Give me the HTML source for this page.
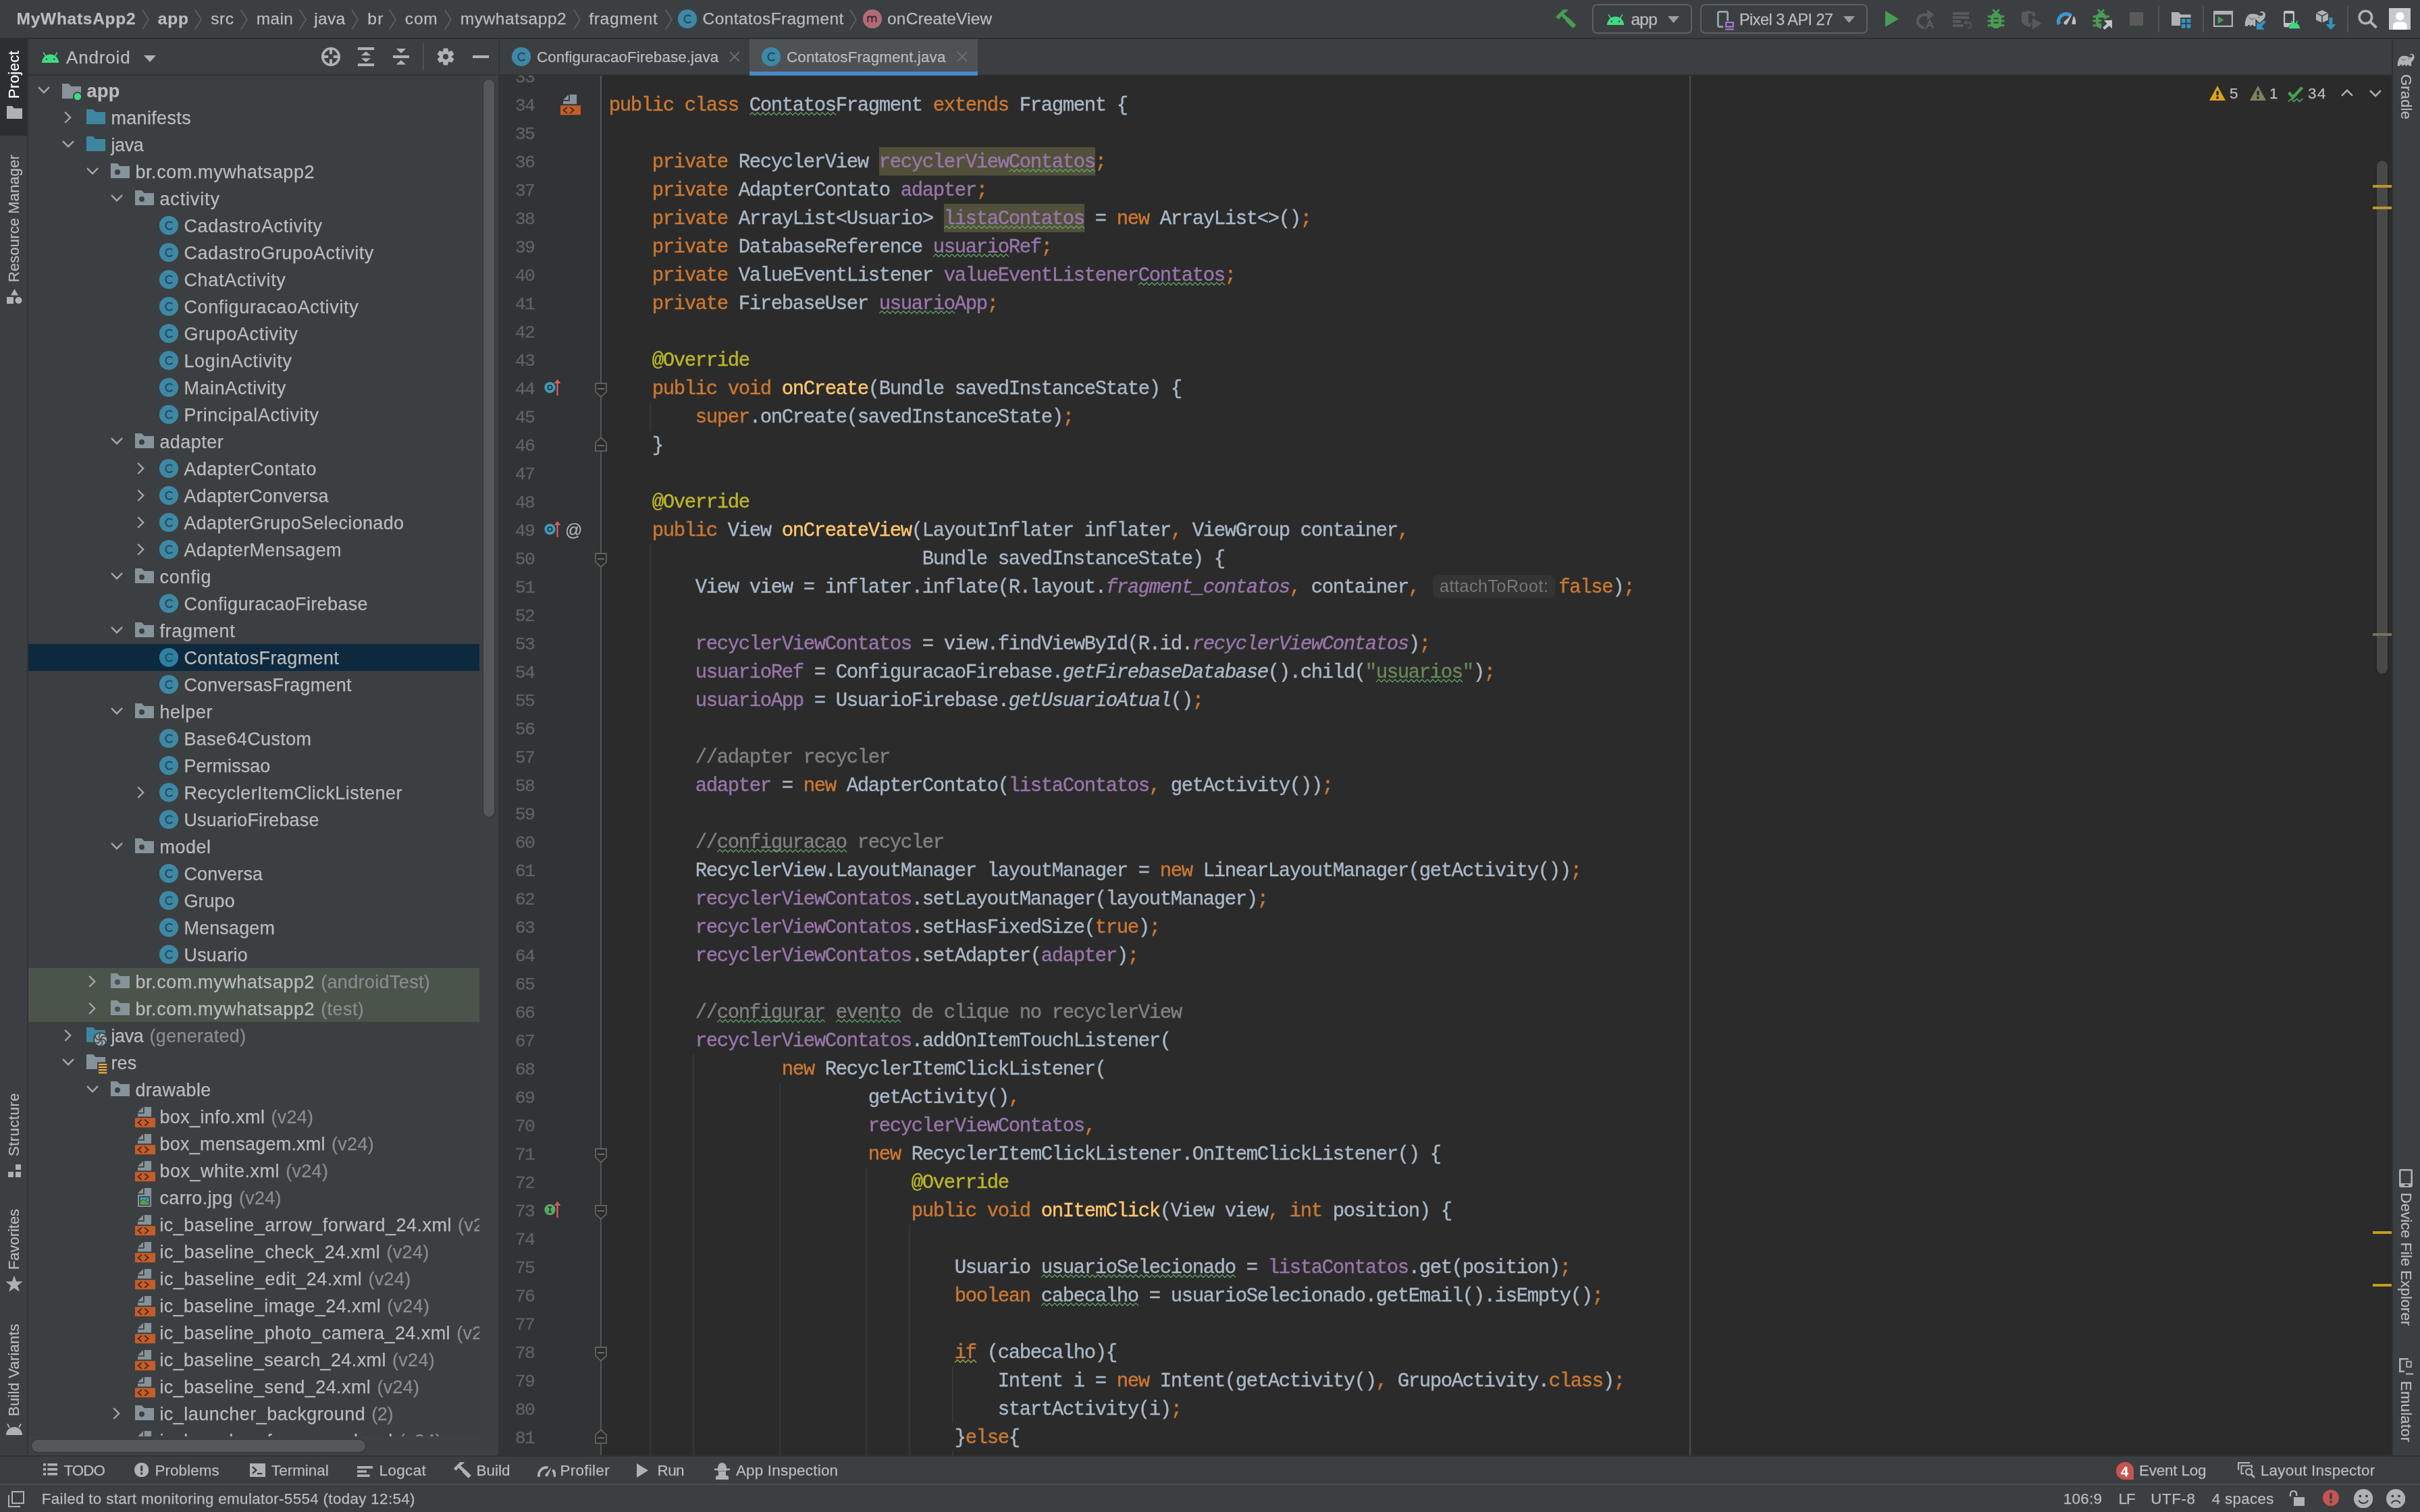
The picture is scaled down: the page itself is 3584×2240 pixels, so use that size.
<!DOCTYPE html><html><head><meta charset="utf-8"><title>Android Studio</title><style>
*{box-sizing:border-box;margin:0;padding:0}
@media (-webkit-min-device-pixel-ratio:2) and (max-width:1800px){html{zoom:0.5}}
html,body{width:3584px;height:2240px;overflow:hidden;background:#3c3f41;font-family:"Liberation Sans",sans-serif;color:#bbbbbb}
.abs{position:absolute}
.t{position:absolute;white-space:nowrap;-webkit-text-stroke:0.25px}
#root{position:absolute;left:0;top:0;width:3584px;height:2240px;overflow:hidden;will-change:transform}
#nav{position:absolute;left:0;top:0;width:3584px;height:56px;background:#3c3f41}
#navb{position:absolute;left:0;top:56px;width:3584px;height:2px;background:#2d2f30}
#lstrip{position:absolute;left:0;top:58px;width:40px;height:2098px;background:#3c3f41}
#lstripb{position:absolute;left:40px;top:58px;width:2px;height:2098px;background:#313335}
#proj{position:absolute;left:42px;top:58px;width:696px;height:2098px;background:#3c3f41}
#projhb{position:absolute;left:0;top:52px;width:696px;height:2px;background:#313234}
#tree{position:absolute;left:0;top:54px;width:668px;height:2016px;overflow:hidden}
.row{position:absolute;left:0;width:668px;height:40px}
.row.sel{background:#0d293e}
.row.tst{background:#4a544a}
.tt{-webkit-text-stroke:0.25px;position:absolute;top:1px;line-height:40px;font-size:27px;color:#bbbbbb;white-space:nowrap}
.suf{color:#8a8c8e}
#projr{position:absolute;left:738px;top:58px;width:2px;height:2098px;background:#323232}
#ed{position:absolute;left:740px;top:58px;width:2802px;height:2098px;background:#2b2b2b;overflow:hidden}
#tabs{position:absolute;left:0;top:0;width:2802px;height:52px;background:#3c3f41}
#tabsb{position:absolute;left:0;top:52px;width:2802px;height:2px;background:#323232}
#edc{position:absolute;left:0;top:54px;width:2802px;height:2044px;overflow:hidden;background:#2b2b2b}
#gut{position:absolute;left:0;top:0;width:151px;height:2044px;background:#313335}
#gutl{position:absolute;left:149px;top:0;width:2px;height:2044px;background:#555555}
.ln{position:absolute;left:0;width:51.5px;text-align:right;font-family:"Liberation Mono",monospace;font-size:26.5px;letter-spacing:-1.5px;line-height:42px;color:#606366;white-space:pre;margin-top:1.5px;-webkit-text-stroke:0.3px}
.cl{position:absolute;left:161.8px;font-family:"Liberation Mono",monospace;font-size:29px;letter-spacing:-1.403px;line-height:46px;color:#a9b7c6;white-space:pre;height:42px;-webkit-text-stroke:0.4px}
.cl span{display:inline-block;height:42px;vertical-align:top}
.k{color:#cc7832}.f{color:#9876aa}.a{color:#bbb529}.m{color:#ffc66d}.c{color:#808080}.s{color:#6a8759}
.i{font-style:italic}
.h{background:#52503a}
.ty{text-decoration:underline wavy #4f9455;text-decoration-thickness:1.45px;text-underline-offset:3px;text-decoration-skip-ink:none}
.wn{text-decoration:underline wavy #a8a657;text-decoration-thickness:1.45px;text-underline-offset:3px;text-decoration-skip-ink:none}
.hint{-webkit-text-stroke:0;letter-spacing:0.55px;font-family:"Liberation Sans",sans-serif;font-size:25px;color:#787878;background:#343434;border-radius:8px;height:34px !important;line-height:33px;margin-top:4px;width:181px;text-align:center;margin-right:5px;margin-left:4.5px}
#rstripb{position:absolute;left:3542px;top:58px;width:2px;height:2098px;background:#323232}
#rstrip{position:absolute;left:3544px;top:58px;width:40px;height:2098px;background:#3c3f41}
#bbar{position:absolute;left:0;top:2156px;width:3584px;height:42px;background:#3c3f41;border-top:2px solid #323232}
#sbar{position:absolute;left:0;top:2198px;width:3584px;height:42px;background:#3c3f41;border-top:2px solid #4b4d4f}
.guide{position:absolute;width:2px;background:#373737}
.vt{-webkit-text-stroke:0.2px;position:absolute;white-space:nowrap;font-size:22px;line-height:24px;color:#bbbbbb;transform-origin:0 0}
</style></head><body><div id="root">
<div id="nav">
<div class="t" style="left:24.6px;top:12.2px;font-size:24.5px;line-height:32px;color:#bbbbbb;font-weight:bold;letter-spacing:0.72px;">MyWhatsApp2</div>
<div class="t" style="left:233.8px;top:12.2px;font-size:24.5px;line-height:32px;color:#bbbbbb;font-weight:bold;letter-spacing:0.85px;">app</div>
<div class="t" style="left:312.2px;top:12.2px;font-size:24.5px;line-height:32px;color:#bbbbbb;letter-spacing:0.58px;">src</div>
<div class="t" style="left:379.8px;top:12.2px;font-size:24.5px;line-height:32px;color:#bbbbbb;letter-spacing:0.35px;">main</div>
<div class="t" style="left:465.3px;top:12.2px;font-size:24.5px;line-height:32px;color:#bbbbbb;letter-spacing:0.26px;">java</div>
<div class="t" style="left:544.3px;top:12.2px;font-size:24.5px;line-height:32px;color:#bbbbbb;letter-spacing:1.26px;">br</div>
<div class="t" style="left:599.8px;top:12.2px;font-size:24.5px;line-height:32px;color:#bbbbbb;letter-spacing:0.84px;">com</div>
<div class="t" style="left:681.7px;top:12.2px;font-size:24.5px;line-height:32px;color:#bbbbbb;letter-spacing:0.59px;">mywhatsapp2</div>
<div class="t" style="left:872.2px;top:12.2px;font-size:24.5px;line-height:32px;color:#bbbbbb;letter-spacing:0.71px;">fragment</div>
<div class="t" style="left:1040.6px;top:12.2px;font-size:24.5px;line-height:32px;color:#bbbbbb;letter-spacing:0.38px;">ContatosFragment</div>
<div class="t" style="left:1314.1px;top:12.2px;font-size:24.5px;line-height:32px;color:#bbbbbb;letter-spacing:0.15px;">onCreateView</div>
<svg style="position:absolute;left:210px;top:14px;" width="11" height="30" viewBox="0 0 11 30"><path d="M1 0.5L10 15L1 29.5" fill="none" stroke="#5e6163" stroke-width="1.8"/></svg>
<svg style="position:absolute;left:288px;top:14px;" width="11" height="30" viewBox="0 0 11 30"><path d="M1 0.5L10 15L1 29.5" fill="none" stroke="#5e6163" stroke-width="1.8"/></svg>
<svg style="position:absolute;left:356px;top:14px;" width="11" height="30" viewBox="0 0 11 30"><path d="M1 0.5L10 15L1 29.5" fill="none" stroke="#5e6163" stroke-width="1.8"/></svg>
<svg style="position:absolute;left:443px;top:14px;" width="11" height="30" viewBox="0 0 11 30"><path d="M1 0.5L10 15L1 29.5" fill="none" stroke="#5e6163" stroke-width="1.8"/></svg>
<svg style="position:absolute;left:519.7px;top:14px;" width="11" height="30" viewBox="0 0 11 30"><path d="M1 0.5L10 15L1 29.5" fill="none" stroke="#5e6163" stroke-width="1.8"/></svg>
<svg style="position:absolute;left:576px;top:14px;" width="11" height="30" viewBox="0 0 11 30"><path d="M1 0.5L10 15L1 29.5" fill="none" stroke="#5e6163" stroke-width="1.8"/></svg>
<svg style="position:absolute;left:658px;top:14px;" width="11" height="30" viewBox="0 0 11 30"><path d="M1 0.5L10 15L1 29.5" fill="none" stroke="#5e6163" stroke-width="1.8"/></svg>
<svg style="position:absolute;left:848.5px;top:14px;" width="11" height="30" viewBox="0 0 11 30"><path d="M1 0.5L10 15L1 29.5" fill="none" stroke="#5e6163" stroke-width="1.8"/></svg>
<svg style="position:absolute;left:984.5px;top:14px;" width="11" height="30" viewBox="0 0 11 30"><path d="M1 0.5L10 15L1 29.5" fill="none" stroke="#5e6163" stroke-width="1.8"/></svg>
<svg style="position:absolute;left:1257.7px;top:14px;" width="11" height="30" viewBox="0 0 11 30"><path d="M1 0.5L10 15L1 29.5" fill="none" stroke="#5e6163" stroke-width="1.8"/></svg>
<svg style="position:absolute;left:1003.7px;top:13.8px;overflow:visible;" width="28" height="28" viewBox="0 0 28 28"><circle cx="14" cy="14" r="14.1" fill="#3e88a5"/><path d="M19.2 10.4 A5.6 5.6 0 1 0 19.2 17.8" fill="none" stroke="#23495a" stroke-width="2.1"/></svg>
<svg style="position:absolute;left:1277.7px;top:13.8px;overflow:visible;" width="28" height="28" viewBox="0 0 28 28"><circle cx="14" cy="14" r="14.1" fill="#b06b79"/><path d="M7.3 18.9V10M7.3 13.4C7.6 11.2 9 10.3 10.4 10.3C12.2 10.3 13.4 11.4 13.4 13.6V18.9M13.4 13.4C13.7 11.2 15.1 10.3 16.5 10.3C18.3 10.3 19.5 11.4 19.5 13.6V18.9" fill="none" stroke="#47262e" stroke-width="2"/></svg>
<svg style="position:absolute;left:2303px;top:13px;" width="33" height="30" viewBox="0 0 33 30"><path d="M1 12L12.1 1L19.1 1.2V2.6L13 7.5L19.7 13.2L20.7 13.7L31.1 24L26.5 28.9L16 18.6V17L9.2 11L5.4 16.1Z" fill="#499c54"/></svg>
<div class="abs" style="left:2358px;top:6px;width:148px;height:44px;border:2px solid #5e6062;border-radius:7px"></div>
<svg style="position:absolute;left:2379.7px;top:20px;overflow:visible;" width="25" height="17.0" viewBox="0 0 25 17"><path d="M0 17A12.5 12.5 0 0 1 25 17Z" fill="#3ddc84"/><path d="M5.6 7.4L2.6 2.2M19.4 7.4L22.4 2.2" stroke="#3ddc84" stroke-width="1.7" stroke-linecap="round"/><circle cx="6.9" cy="11.8" r="1.25" fill="#3c3f41"/><circle cx="18.1" cy="11.8" r="1.25" fill="#3c3f41"/></svg>
<div class="t" style="left:2415.5px;top:12.5px;font-size:24.5px;line-height:32px;color:#bbbbbb;letter-spacing:-0.79px;">app</div>
<svg style="position:absolute;left:2469.5px;top:24px;" width="17" height="10" viewBox="0 0 17 10"><path d="M0 0H17L8.5 10Z" fill="#9a9da0"/></svg>
<div class="abs" style="left:2518px;top:6px;width:248px;height:44px;border:2px solid #5e6062;border-radius:7px"></div>
<svg style="position:absolute;left:2543px;top:16px;" width="26" height="29" viewBox="0 0 26 29"><rect x="1.4" y="1.4" width="14.2" height="22.2" rx="2" fill="none" stroke="#9aa7b0" stroke-width="2.8"/><rect x="9" y="15" width="17" height="14" fill="#3c3f41"/><rect x="13.2" y="17.2" width="10.6" height="6.4" fill="none" stroke="#b07ed3" stroke-width="2"/><rect x="12" y="26.4" width="13" height="2" fill="#b07ed3"/></svg>
<div class="t" style="left:2576.0px;top:13.9px;font-size:23.4px;line-height:30px;color:#bbbbbb;letter-spacing:-0.51px;">Pixel 3 API 27</div>
<svg style="position:absolute;left:2729.5px;top:24px;" width="17" height="10" viewBox="0 0 17 10"><path d="M0 0H17L8.5 10Z" fill="#9a9da0"/></svg>
<svg style="position:absolute;left:2792px;top:16px;" width="20" height="24" viewBox="0 0 20 24"><path d="M0 0L20 12L0 24Z" fill="#499c54"/></svg>
<svg style="position:absolute;left:2826px;top:4px;" width="120" height="48" viewBox="0 0 120 48"><path d="M28 18H23.3A9.3 9.3 0 0 0 23.3 36.6H24.2" fill="none" stroke="#5a5a5a" stroke-width="4.2"/><path d="M28 9.9L38.7 17.8L28 26Z" fill="#5a5a5a"/><path d="M26.6 38.2L32 26.6L37.4 38.2M28.6 33.6H35.4" fill="none" stroke="#5a5a5a" stroke-width="2.6"/><g fill="#5a5a5a"><rect x="65.9" y="14.1" width="24.1" height="3.8"/><rect x="65.9" y="20.1" width="24.1" height="3.8"/><rect x="65.9" y="26" width="12" height="3.8"/><rect x="65.9" y="32.1" width="15.9" height="3.8"/><path d="M82 29.5L87 26V33Z"/></g><path d="M86.6 29.5H89.3A4.1 4.1 0 0 1 89.3 37.7H88.4" fill="none" stroke="#5a5a5a" stroke-width="1.9"/></svg>
<svg style="position:absolute;left:2930px;top:4px;" width="104" height="48" viewBox="0 0 104 48"><g transform="translate(0,0)"><g fill="#499c54"><rect x="18.2" y="14.7" width="15.9" height="23.5" rx="7.9"/><rect x="13.9" y="18.8" width="24.3" height="3.2"/><rect x="13.9" y="25.5" width="24.3" height="3"/><rect x="13.9" y="32.2" width="24.3" height="3"/></g><path d="M21.3 10.2L26 14.9L30.6 10.2" fill="none" stroke="#499c54" stroke-width="2.8"/><rect x="22.6" y="15" width="7" height="4" fill="#499c54"/><rect x="22.6" y="22.3" width="7.1" height="2.3" fill="#3c3f41"/><rect x="22.6" y="28.4" width="7.1" height="2.3" fill="#3c3f41"/></g><path d="M64 14.4L73.9 12.1L83.8 14.4V19.8H79.8V16.1H74.1V31.9L78.1 29.1V34.2L73.9 35.9C67 33 64 30 64 26.8Z" fill="#5a5a5a"/><path d="M79.8 22.3L93.5 31L79.8 39.7Z" fill="#5a5a5a"/></svg>
<svg style="position:absolute;left:3034px;top:4px;" width="120" height="48" viewBox="0 0 120 48"><path d="M15.29 32A11.4 11.4 0 0 1 33.02 19.12" fill="none" stroke="#3a97d0" stroke-width="5.4"/><path d="M35 17.1L27.5 31.2A2.7 2.7 0 0 1 23 28.2Z" fill="#c0c1c2"/><path d="M37.2 19.4C39.8 22.8 40.8 27.6 40 32H34.3C34.9 27 36 22.6 37.2 19.4Z" fill="#c0c1c2"/><g transform="translate(51.7,0)"><g fill="#499c54"><rect x="18.2" y="14.7" width="15.9" height="23.5" rx="7.9"/><rect x="13.9" y="18.8" width="24.3" height="3.2"/><rect x="13.9" y="25.5" width="24.3" height="3"/><rect x="13.9" y="32.2" width="24.3" height="3"/></g><path d="M21.3 10.2L26 14.9L30.6 10.2" fill="none" stroke="#499c54" stroke-width="2.8"/><rect x="22.6" y="15" width="7" height="4" fill="#499c54"/><rect x="22.6" y="22.3" width="7.1" height="2.3" fill="#3c3f41"/><rect x="22.6" y="28.4" width="7.1" height="2.3" fill="#3c3f41"/></g><rect x="78.2" y="24" width="18" height="18" fill="#3c3f41"/><rect x="74.4" y="22.2" width="7" height="2.4" fill="#3c3f41"/><path d="M81.8 26.3L94 25.8V38.2L89.7 34.2L82.8 39.9L80.3 36.7L86.5 31Z" fill="#c4c4c4"/></svg>
<div class="abs" style="left:3154px;top:18px;width:20px;height:20px;background:#5a5a5a"></div>
<div class="abs" style="left:3196px;top:8px;width:2px;height:40px;background:#515355"></div>
<svg style="position:absolute;left:3215.5px;top:18px;" width="29" height="24" viewBox="0 0 29 24"><path d="M0 0H10.5L14 3.6H28.6V8H13V20H0Z" fill="#afb1b3"/><g fill="#3592c4"><rect x="14.8" y="10" width="5.8" height="5.8"/><rect x="22.6" y="10" width="5.8" height="5.8"/><rect x="14.8" y="17.8" width="5.8" height="5.8"/><rect x="22.6" y="17.8" width="5.8" height="5.8"/></g></svg>
<div class="abs" style="left:3262px;top:8px;width:2px;height:40px;background:#515355"></div>
<svg style="position:absolute;left:3277.5px;top:16px;" width="29" height="24" viewBox="0 0 29 24"><path d="M0 0H29V24H0ZM2.2 5.4V21.8H26.8V5.4Z" fill="#afb1b3" fill-rule="evenodd"/><path d="M6.5 7.8L15.5 13.6L6.5 19.4Z" fill="#499c54"/></svg>
<svg style="position:absolute;left:3310px;top:4px;" width="120" height="48" viewBox="0 0 120 48"><path d="M14.9 34.7C14.5 27 17 20 21 17.6C24 16 29 16.4 32 17.2C34 18 36 19.6 38.4 19.6C40.4 19.6 41.8 18.2 41.6 16.6C41.4 15 39.6 14.2 38 15L36.6 14.4C38.4 12.4 42 12.4 43.8 14.6C45.8 17.2 45.2 21.4 42.6 24.6L36.6 30.2L30.4 24V34.7H27.4C27.4 32 23.9 32 23.9 34.7H22.4C22.4 32 18.9 32 18.9 34.7Z" fill="#afb1b3"/><path d="M21 21.4C23 25 26 25.4 29 22.6" fill="none" stroke="#3c3f41" stroke-width="0.9"/><circle cx="35" cy="21.8" r="0.8" fill="#3c3f41"/><path d="M32.2 28.5L36.2 31.7L43.1 26L45.9 28.8L39.4 35.2L43.9 39.7H32Z" fill="#3592c4" stroke="#3c3f41" stroke-width="1.4" paint-order="stroke"/><path d="M74.4 12H85.6A2.4 2.4 0 0 1 88 14.4V34A2.2 2.2 0 0 1 85.8 36.2H74.2A2.2 2.2 0 0 1 72 34V14.4A2.4 2.4 0 0 1 74.4 12ZM74.1 16.1V30H85.8V16.1Z" fill="#c0c1c2" fill-rule="evenodd"/><path d="M78.6 39.4A9.4 9.4 0 0 1 97.4 39.4V40H78.6Z" fill="#3c3f41"/><path d="M79.8 38.2A8.2 8.2 0 0 1 96.2 38.2Z" fill="#3ddc84"/><path d="M83.9 27.9L85.4 30.6M92.1 27.9L90.6 30.6" stroke="#3ddc84" stroke-width="1.9" stroke-linecap="round"/></svg>
<svg style="position:absolute;left:3430px;top:15px;" width="30" height="29" viewBox="0 0 30 29"><path d="M9 0L18 4.2V14.4L9 18.8L0 14.4V4.2Z" fill="#afb1b3"/><path d="M9 8.6V18.8M0.4 4.4L9 8.6L17.6 4.4" fill="none" stroke="#3c3f41" stroke-width="1.6"/><path d="M19.4 11H24.4V21H29.6L21.9 29L14.2 21H19.4Z" fill="#3592c4" stroke="#3c3f41" stroke-width="1.2" paint-order="stroke"/></svg>
<div class="abs" style="left:3476px;top:8px;width:2px;height:40px;background:#515355"></div>
<svg style="position:absolute;left:3491.5px;top:14px;" width="29" height="28" viewBox="0 0 29 28"><circle cx="11.4" cy="11.4" r="9.2" fill="none" stroke="#afb1b3" stroke-width="3.6"/><path d="M18 18L27.6 27" stroke="#afb1b3" stroke-width="4"/></svg>
<svg style="position:absolute;left:3537.7px;top:12px;" width="32.6" height="32.4" viewBox="0 0 32.6 32.4"><rect width="32.6" height="32.4" fill="#c9c9c9"/><circle cx="16.3" cy="12.2" r="6.2" fill="#fff"/><path d="M6 32.4V26A5.4 5.4 0 0 1 11.4 20.6H21.2A5.4 5.4 0 0 1 26.6 26V32.4Z" fill="#fff"/></svg>
</div><div id="navb"></div>
<div id="lstrip">
<div class="abs" style="left:0;top:0;width:40px;height:143px;background:#2c2e2f"></div>
</div><div id="lstripb"></div>
<div class="vt" style="left:7.5px;top:145.5px;font-size:22px;line-height:26px;color:#ffffff;transform:rotate(-90deg);letter-spacing:0.36px;">Project</div>
<svg style="position:absolute;left:10px;top:157px;" width="23" height="19" viewBox="0 0 23 19"><path d="M0 0H8L11 3.5H23V19H0Z" fill="#afb1b3"/></svg>
<div class="vt" style="left:7.5px;top:417.5px;font-size:22px;line-height:26px;color:#bbbbbb;transform:rotate(-90deg);letter-spacing:0.12px;">Resource Manager</div>
<svg style="position:absolute;left:10px;top:428px;" width="23" height="22" viewBox="0 0 23 22"><path d="M11.5 0L17 9.5H6Z" fill="#afb1b3"/><rect x="0" y="12" width="10" height="10" fill="#afb1b3"/><circle cx="17.5" cy="17" r="5" fill="#afb1b3"/></svg>
<div class="vt" style="left:7.5px;top:1713.0px;font-size:22px;line-height:26px;color:#bbbbbb;transform:rotate(-90deg);letter-spacing:0.53px;">Structure</div>
<svg style="position:absolute;left:12px;top:1725px;" width="19" height="19" viewBox="0 0 19 19"><rect x="11" y="0" width="8" height="8" fill="#afb1b3"/><rect x="0" y="11" width="8" height="8" fill="#afb1b3"/><rect x="11" y="11" width="8" height="8" fill="#afb1b3"/></svg>
<div class="vt" style="left:7.5px;top:1881.0px;font-size:22px;line-height:26px;color:#bbbbbb;transform:rotate(-90deg);letter-spacing:-0.05px;">Favorites</div>
<svg style="position:absolute;left:8px;top:1889px;" width="26" height="26" viewBox="0 0 26 26"><path d="M13 0.5L16.2 9.6H25.8L18 15.4L20.9 24.8L13 19.2L5.1 24.8L8 15.4L0.2 9.6H9.8Z" fill="#afb1b3"/></svg>
<div class="vt" style="left:7.5px;top:2097.5px;font-size:22px;line-height:26px;color:#bbbbbb;transform:rotate(-90deg);letter-spacing:0.21px;">Build Variants</div>
<svg style="position:absolute;left:9px;top:2108px;" width="24" height="18" viewBox="0 0 24 18"><path d="M0 18A12 12 0 0 1 24 18Z" fill="#afb1b3"/><path d="M5 7L2 1.5M19 7L22 1.5" stroke="#afb1b3" stroke-width="2"/></svg>
<div id="proj"><svg style="position:absolute;left:20px;top:18px;overflow:visible;" width="25" height="17.0" viewBox="0 0 25 17"><path d="M0 17A12.5 12.5 0 0 1 25 17Z" fill="#3ddc84"/><path d="M5.6 7.4L2.6 2.2M19.4 7.4L22.4 2.2" stroke="#3ddc84" stroke-width="1.7" stroke-linecap="round"/><circle cx="6.9" cy="11.8" r="1.25" fill="#3c3f41"/><circle cx="18.1" cy="11.8" r="1.25" fill="#3c3f41"/></svg>
<div class="t" style="left:56.0px;top:9.5px;font-size:26px;line-height:34px;color:#bbbbbb;letter-spacing:0.83px;">Android</div>
<svg style="position:absolute;left:171px;top:23.599999999999994px;" width="18" height="10" viewBox="0 0 18 10"><path d="M0 0H18L9.0 10Z" fill="#afb1b3"/></svg>
<svg style="position:absolute;left:398px;top:0px;" width="300" height="52" viewBox="0 0 300 52"><circle cx="50" cy="26" r="12.2" fill="none" stroke="#afb1b3" stroke-width="3.6"/><path d="M50 12V22.2M50 29.8V40M36 26H46.2M53.8 26H64" stroke="#afb1b3" stroke-width="3.9"/><g fill="#afb1b3"><rect x="89.9" y="12" width="24.2" height="4.1"/><rect x="89.9" y="36" width="24.2" height="4.1"/><path d="M102 18.2L109.2 24.2H94.8ZM102 34L109.2 28.2H94.8Z"/><rect x="142" y="24" width="24" height="4.1"/><path d="M154 20.9L161.2 13.9H146.8ZM154 31L161.2 37.8H146.8Z"/></g><rect x="186" y="6" width="1.9" height="40" fill="#515355"/><g transform="translate(220,25.9) scale(0.925)" fill="#afb1b3"><path transform="rotate(0)" d="M-3.4 -13.5H3.4L4.6 -8H-4.6Z"/><path transform="rotate(60)" d="M-3.4 -13.5H3.4L4.6 -8H-4.6Z"/><path transform="rotate(120)" d="M-3.4 -13.5H3.4L4.6 -8H-4.6Z"/><path transform="rotate(180)" d="M-3.4 -13.5H3.4L4.6 -8H-4.6Z"/><path transform="rotate(240)" d="M-3.4 -13.5H3.4L4.6 -8H-4.6Z"/><path transform="rotate(300)" d="M-3.4 -13.5H3.4L4.6 -8H-4.6Z"/><circle r="9.4"/><circle r="4.3" fill="#3c3f41"/></g><rect x="260" y="24" width="24.1" height="4.1" fill="#afb1b3"/></svg><div id="projhb"></div><div id="tree"><div class="row" style="top:2px">
<svg style="position:absolute;left:14px;top:14px;" width="18" height="11" viewBox="0 0 18 11"><path d="M1 1.2L9 9.2L17 1.2" fill="none" stroke="#a4a6a8" stroke-width="2.4"/></svg>
<svg style="position:absolute;left:50px;top:10px;overflow:visible;" width="32" height="28" viewBox="0 0 32 28"><path d="M0 0H9.6L13.6 4H28V22H0Z" fill="#87939a"/><circle cx="23" cy="19" r="7" fill="#3c3f41"/><circle cx="23" cy="19" r="5.2" fill="#3ddc84"/></svg>
<span class="tt" style="left:86.4px;letter-spacing:0.47px;font-weight:bold;">app</span>
</div>
<div class="row" style="top:42px">
<svg style="position:absolute;left:53px;top:11px;" width="11" height="18" viewBox="0 0 11 18"><path d="M1.2 1L9.2 9L1.2 17" fill="none" stroke="#a4a6a8" stroke-width="2.4"/></svg>
<svg style="position:absolute;left:86px;top:8px;" width="28" height="22" viewBox="0 0 28 22"><path d="M0 0H9.6L13.6 4H28V22H0Z" fill="#3e86a0"/></svg>
<span class="tt" style="left:122.4px;letter-spacing:0.34px;">manifests</span>
</div>
<div class="row" style="top:82px">
<svg style="position:absolute;left:50px;top:14px;" width="18" height="11" viewBox="0 0 18 11"><path d="M1 1.2L9 9.2L17 1.2" fill="none" stroke="#a4a6a8" stroke-width="2.4"/></svg>
<svg style="position:absolute;left:86px;top:8px;" width="28" height="22" viewBox="0 0 28 22"><path d="M0 0H9.6L13.6 4H28V22H0Z" fill="#3e86a0"/></svg>
<span class="tt" style="left:122.4px;letter-spacing:-0.38px;">java</span>
</div>
<div class="row" style="top:122px">
<svg style="position:absolute;left:86px;top:14px;" width="18" height="11" viewBox="0 0 18 11"><path d="M1 1.2L9 9.2L17 1.2" fill="none" stroke="#a4a6a8" stroke-width="2.4"/></svg>
<svg style="position:absolute;left:122px;top:8px;" width="28" height="22" viewBox="0 0 28 22"><path d="M0 0H9.6L13.6 4H28V22H0Z" fill="#87939a"/><circle cx="10" cy="13" r="4" fill="#3c3f41"/></svg>
<span class="tt" style="left:158.4px;letter-spacing:0.59px;">br.com.mywhatsapp2</span>
</div>
<div class="row" style="top:162px">
<svg style="position:absolute;left:122px;top:14px;" width="18" height="11" viewBox="0 0 18 11"><path d="M1 1.2L9 9.2L17 1.2" fill="none" stroke="#a4a6a8" stroke-width="2.4"/></svg>
<svg style="position:absolute;left:158px;top:8px;" width="28" height="22" viewBox="0 0 28 22"><path d="M0 0H9.6L13.6 4H28V22H0Z" fill="#87939a"/><circle cx="10" cy="13" r="4" fill="#3c3f41"/></svg>
<span class="tt" style="left:194.4px;letter-spacing:0.86px;">activity</span>
</div>
<div class="row" style="top:202px">
<svg style="position:absolute;left:194px;top:6px;overflow:visible;" width="28" height="28" viewBox="0 0 28 28"><circle cx="14" cy="14" r="14.1" fill="#3e88a5"/><path d="M19.2 10.4 A5.6 5.6 0 1 0 19.2 17.8" fill="none" stroke="#23495a" stroke-width="2.1"/></svg>
<span class="tt" style="left:230.4px;letter-spacing:0.63px;">CadastroActivity</span>
</div>
<div class="row" style="top:242px">
<svg style="position:absolute;left:194px;top:6px;overflow:visible;" width="28" height="28" viewBox="0 0 28 28"><circle cx="14" cy="14" r="14.1" fill="#3e88a5"/><path d="M19.2 10.4 A5.6 5.6 0 1 0 19.2 17.8" fill="none" stroke="#23495a" stroke-width="2.1"/></svg>
<span class="tt" style="left:230.4px;letter-spacing:0.54px;">CadastroGrupoActivity</span>
</div>
<div class="row" style="top:282px">
<svg style="position:absolute;left:194px;top:6px;overflow:visible;" width="28" height="28" viewBox="0 0 28 28"><circle cx="14" cy="14" r="14.1" fill="#3e88a5"/><path d="M19.2 10.4 A5.6 5.6 0 1 0 19.2 17.8" fill="none" stroke="#23495a" stroke-width="2.1"/></svg>
<span class="tt" style="left:230.4px;letter-spacing:0.72px;">ChatActivity</span>
</div>
<div class="row" style="top:322px">
<svg style="position:absolute;left:194px;top:6px;overflow:visible;" width="28" height="28" viewBox="0 0 28 28"><circle cx="14" cy="14" r="14.1" fill="#3e88a5"/><path d="M19.2 10.4 A5.6 5.6 0 1 0 19.2 17.8" fill="none" stroke="#23495a" stroke-width="2.1"/></svg>
<span class="tt" style="left:230.4px;letter-spacing:0.64px;">ConfiguracaoActivity</span>
</div>
<div class="row" style="top:362px">
<svg style="position:absolute;left:194px;top:6px;overflow:visible;" width="28" height="28" viewBox="0 0 28 28"><circle cx="14" cy="14" r="14.1" fill="#3e88a5"/><path d="M19.2 10.4 A5.6 5.6 0 1 0 19.2 17.8" fill="none" stroke="#23495a" stroke-width="2.1"/></svg>
<span class="tt" style="left:230.4px;letter-spacing:0.68px;">GrupoActivity</span>
</div>
<div class="row" style="top:402px">
<svg style="position:absolute;left:194px;top:6px;overflow:visible;" width="28" height="28" viewBox="0 0 28 28"><circle cx="14" cy="14" r="14.1" fill="#3e88a5"/><path d="M19.2 10.4 A5.6 5.6 0 1 0 19.2 17.8" fill="none" stroke="#23495a" stroke-width="2.1"/></svg>
<span class="tt" style="left:230.4px;letter-spacing:0.66px;">LoginActivity</span>
</div>
<div class="row" style="top:442px">
<svg style="position:absolute;left:194px;top:6px;overflow:visible;" width="28" height="28" viewBox="0 0 28 28"><circle cx="14" cy="14" r="14.1" fill="#3e88a5"/><path d="M19.2 10.4 A5.6 5.6 0 1 0 19.2 17.8" fill="none" stroke="#23495a" stroke-width="2.1"/></svg>
<span class="tt" style="left:230.4px;letter-spacing:0.61px;">MainActivity</span>
</div>
<div class="row" style="top:482px">
<svg style="position:absolute;left:194px;top:6px;overflow:visible;" width="28" height="28" viewBox="0 0 28 28"><circle cx="14" cy="14" r="14.1" fill="#3e88a5"/><path d="M19.2 10.4 A5.6 5.6 0 1 0 19.2 17.8" fill="none" stroke="#23495a" stroke-width="2.1"/></svg>
<span class="tt" style="left:230.4px;letter-spacing:0.66px;">PrincipalActivity</span>
</div>
<div class="row" style="top:522px">
<svg style="position:absolute;left:122px;top:14px;" width="18" height="11" viewBox="0 0 18 11"><path d="M1 1.2L9 9.2L17 1.2" fill="none" stroke="#a4a6a8" stroke-width="2.4"/></svg>
<svg style="position:absolute;left:158px;top:8px;" width="28" height="22" viewBox="0 0 28 22"><path d="M0 0H9.6L13.6 4H28V22H0Z" fill="#87939a"/><circle cx="10" cy="13" r="4" fill="#3c3f41"/></svg>
<span class="tt" style="left:194.4px;letter-spacing:0.45px;">adapter</span>
</div>
<div class="row" style="top:562px">
<svg style="position:absolute;left:161px;top:11px;" width="11" height="18" viewBox="0 0 11 18"><path d="M1.2 1L9.2 9L1.2 17" fill="none" stroke="#a4a6a8" stroke-width="2.4"/></svg>
<svg style="position:absolute;left:194px;top:6px;overflow:visible;" width="28" height="28" viewBox="0 0 28 28"><circle cx="14" cy="14" r="14.1" fill="#3e88a5"/><path d="M19.2 10.4 A5.6 5.6 0 1 0 19.2 17.8" fill="none" stroke="#23495a" stroke-width="2.1"/></svg>
<span class="tt" style="left:230.4px;letter-spacing:0.53px;">AdapterContato</span>
</div>
<div class="row" style="top:602px">
<svg style="position:absolute;left:161px;top:11px;" width="11" height="18" viewBox="0 0 11 18"><path d="M1.2 1L9.2 9L1.2 17" fill="none" stroke="#a4a6a8" stroke-width="2.4"/></svg>
<svg style="position:absolute;left:194px;top:6px;overflow:visible;" width="28" height="28" viewBox="0 0 28 28"><circle cx="14" cy="14" r="14.1" fill="#3e88a5"/><path d="M19.2 10.4 A5.6 5.6 0 1 0 19.2 17.8" fill="none" stroke="#23495a" stroke-width="2.1"/></svg>
<span class="tt" style="left:230.4px;letter-spacing:0.28px;">AdapterConversa</span>
</div>
<div class="row" style="top:642px">
<svg style="position:absolute;left:161px;top:11px;" width="11" height="18" viewBox="0 0 11 18"><path d="M1.2 1L9.2 9L1.2 17" fill="none" stroke="#a4a6a8" stroke-width="2.4"/></svg>
<svg style="position:absolute;left:194px;top:6px;overflow:visible;" width="28" height="28" viewBox="0 0 28 28"><circle cx="14" cy="14" r="14.1" fill="#3e88a5"/><path d="M19.2 10.4 A5.6 5.6 0 1 0 19.2 17.8" fill="none" stroke="#23495a" stroke-width="2.1"/></svg>
<span class="tt" style="left:230.4px;letter-spacing:0.34px;">AdapterGrupoSelecionado</span>
</div>
<div class="row" style="top:682px">
<svg style="position:absolute;left:161px;top:11px;" width="11" height="18" viewBox="0 0 11 18"><path d="M1.2 1L9.2 9L1.2 17" fill="none" stroke="#a4a6a8" stroke-width="2.4"/></svg>
<svg style="position:absolute;left:194px;top:6px;overflow:visible;" width="28" height="28" viewBox="0 0 28 28"><circle cx="14" cy="14" r="14.1" fill="#3e88a5"/><path d="M19.2 10.4 A5.6 5.6 0 1 0 19.2 17.8" fill="none" stroke="#23495a" stroke-width="2.1"/></svg>
<span class="tt" style="left:230.4px;letter-spacing:0.36px;">AdapterMensagem</span>
</div>
<div class="row" style="top:722px">
<svg style="position:absolute;left:122px;top:14px;" width="18" height="11" viewBox="0 0 18 11"><path d="M1 1.2L9 9.2L17 1.2" fill="none" stroke="#a4a6a8" stroke-width="2.4"/></svg>
<svg style="position:absolute;left:158px;top:8px;" width="28" height="22" viewBox="0 0 28 22"><path d="M0 0H9.6L13.6 4H28V22H0Z" fill="#87939a"/><circle cx="10" cy="13" r="4" fill="#3c3f41"/></svg>
<span class="tt" style="left:194.4px;letter-spacing:0.83px;">config</span>
</div>
<div class="row" style="top:762px">
<svg style="position:absolute;left:194px;top:6px;overflow:visible;" width="28" height="28" viewBox="0 0 28 28"><circle cx="14" cy="14" r="14.1" fill="#3e88a5"/><path d="M19.2 10.4 A5.6 5.6 0 1 0 19.2 17.8" fill="none" stroke="#23495a" stroke-width="2.1"/></svg>
<span class="tt" style="left:230.4px;letter-spacing:0.34px;">ConfiguracaoFirebase</span>
</div>
<div class="row" style="top:802px">
<svg style="position:absolute;left:122px;top:14px;" width="18" height="11" viewBox="0 0 18 11"><path d="M1 1.2L9 9.2L17 1.2" fill="none" stroke="#a4a6a8" stroke-width="2.4"/></svg>
<svg style="position:absolute;left:158px;top:8px;" width="28" height="22" viewBox="0 0 28 22"><path d="M0 0H9.6L13.6 4H28V22H0Z" fill="#87939a"/><circle cx="10" cy="13" r="4" fill="#3c3f41"/></svg>
<span class="tt" style="left:194.4px;letter-spacing:0.69px;">fragment</span>
</div>
<div class="row sel" style="top:842px">
<svg style="position:absolute;left:194px;top:6px;overflow:visible;" width="28" height="28" viewBox="0 0 28 28"><circle cx="14" cy="14" r="14.1" fill="#2d80a4"/><path d="M19.2 10.4 A5.6 5.6 0 1 0 19.2 17.8" fill="none" stroke="#23495a" stroke-width="2.1"/></svg>
<span class="tt" style="left:230.4px;letter-spacing:0.39px;">ContatosFragment</span>
</div>
<div class="row" style="top:882px">
<svg style="position:absolute;left:194px;top:6px;overflow:visible;" width="28" height="28" viewBox="0 0 28 28"><circle cx="14" cy="14" r="14.1" fill="#3e88a5"/><path d="M19.2 10.4 A5.6 5.6 0 1 0 19.2 17.8" fill="none" stroke="#23495a" stroke-width="2.1"/></svg>
<span class="tt" style="left:230.4px;letter-spacing:0.22px;">ConversasFragment</span>
</div>
<div class="row" style="top:922px">
<svg style="position:absolute;left:122px;top:14px;" width="18" height="11" viewBox="0 0 18 11"><path d="M1 1.2L9 9.2L17 1.2" fill="none" stroke="#a4a6a8" stroke-width="2.4"/></svg>
<svg style="position:absolute;left:158px;top:8px;" width="28" height="22" viewBox="0 0 28 22"><path d="M0 0H9.6L13.6 4H28V22H0Z" fill="#87939a"/><circle cx="10" cy="13" r="4" fill="#3c3f41"/></svg>
<span class="tt" style="left:194.4px;letter-spacing:0.62px;">helper</span>
</div>
<div class="row" style="top:962px">
<svg style="position:absolute;left:194px;top:6px;overflow:visible;" width="28" height="28" viewBox="0 0 28 28"><circle cx="14" cy="14" r="14.1" fill="#3e88a5"/><path d="M19.2 10.4 A5.6 5.6 0 1 0 19.2 17.8" fill="none" stroke="#23495a" stroke-width="2.1"/></svg>
<span class="tt" style="left:230.4px;letter-spacing:0.37px;">Base64Custom</span>
</div>
<div class="row" style="top:1002px">
<svg style="position:absolute;left:194px;top:6px;overflow:visible;" width="28" height="28" viewBox="0 0 28 28"><circle cx="14" cy="14" r="14.1" fill="#3e88a5"/><path d="M19.2 10.4 A5.6 5.6 0 1 0 19.2 17.8" fill="none" stroke="#23495a" stroke-width="2.1"/></svg>
<span class="tt" style="left:230.4px;letter-spacing:0.05px;">Permissao</span>
</div>
<div class="row" style="top:1042px">
<svg style="position:absolute;left:161px;top:11px;" width="11" height="18" viewBox="0 0 11 18"><path d="M1.2 1L9.2 9L1.2 17" fill="none" stroke="#a4a6a8" stroke-width="2.4"/></svg>
<svg style="position:absolute;left:194px;top:6px;overflow:visible;" width="28" height="28" viewBox="0 0 28 28"><circle cx="14" cy="14" r="14.1" fill="#3e88a5"/><path d="M19.2 10.4 A5.6 5.6 0 1 0 19.2 17.8" fill="none" stroke="#23495a" stroke-width="2.1"/></svg>
<span class="tt" style="left:230.4px;letter-spacing:0.46px;">RecyclerItemClickListener</span>
</div>
<div class="row" style="top:1082px">
<svg style="position:absolute;left:194px;top:6px;overflow:visible;" width="28" height="28" viewBox="0 0 28 28"><circle cx="14" cy="14" r="14.1" fill="#3e88a5"/><path d="M19.2 10.4 A5.6 5.6 0 1 0 19.2 17.8" fill="none" stroke="#23495a" stroke-width="2.1"/></svg>
<span class="tt" style="left:230.4px;letter-spacing:0.14px;">UsuarioFirebase</span>
</div>
<div class="row" style="top:1122px">
<svg style="position:absolute;left:122px;top:14px;" width="18" height="11" viewBox="0 0 18 11"><path d="M1 1.2L9 9.2L17 1.2" fill="none" stroke="#a4a6a8" stroke-width="2.4"/></svg>
<svg style="position:absolute;left:158px;top:8px;" width="28" height="22" viewBox="0 0 28 22"><path d="M0 0H9.6L13.6 4H28V22H0Z" fill="#87939a"/><circle cx="10" cy="13" r="4" fill="#3c3f41"/></svg>
<span class="tt" style="left:194.4px;letter-spacing:0.53px;">model</span>
</div>
<div class="row" style="top:1162px">
<svg style="position:absolute;left:194px;top:6px;overflow:visible;" width="28" height="28" viewBox="0 0 28 28"><circle cx="14" cy="14" r="14.1" fill="#3e88a5"/><path d="M19.2 10.4 A5.6 5.6 0 1 0 19.2 17.8" fill="none" stroke="#23495a" stroke-width="2.1"/></svg>
<span class="tt" style="left:230.4px;letter-spacing:0.17px;">Conversa</span>
</div>
<div class="row" style="top:1202px">
<svg style="position:absolute;left:194px;top:6px;overflow:visible;" width="28" height="28" viewBox="0 0 28 28"><circle cx="14" cy="14" r="14.1" fill="#3e88a5"/><path d="M19.2 10.4 A5.6 5.6 0 1 0 19.2 17.8" fill="none" stroke="#23495a" stroke-width="2.1"/></svg>
<span class="tt" style="left:230.4px;letter-spacing:0.07px;">Grupo</span>
</div>
<div class="row" style="top:1242px">
<svg style="position:absolute;left:194px;top:6px;overflow:visible;" width="28" height="28" viewBox="0 0 28 28"><circle cx="14" cy="14" r="14.1" fill="#3e88a5"/><path d="M19.2 10.4 A5.6 5.6 0 1 0 19.2 17.8" fill="none" stroke="#23495a" stroke-width="2.1"/></svg>
<span class="tt" style="left:230.4px;letter-spacing:0.14px;">Mensagem</span>
</div>
<div class="row" style="top:1282px">
<svg style="position:absolute;left:194px;top:6px;overflow:visible;" width="28" height="28" viewBox="0 0 28 28"><circle cx="14" cy="14" r="14.1" fill="#3e88a5"/><path d="M19.2 10.4 A5.6 5.6 0 1 0 19.2 17.8" fill="none" stroke="#23495a" stroke-width="2.1"/></svg>
<span class="tt" style="left:230.4px;letter-spacing:0.24px;">Usuario</span>
</div>
<div class="row tst" style="top:1322px">
<svg style="position:absolute;left:89px;top:11px;" width="11" height="18" viewBox="0 0 11 18"><path d="M1.2 1L9.2 9L1.2 17" fill="none" stroke="#a4a6a8" stroke-width="2.4"/></svg>
<svg style="position:absolute;left:122px;top:8px;" width="28" height="22" viewBox="0 0 28 22"><path d="M0 0H9.6L13.6 4H28V22H0Z" fill="#87939a"/><circle cx="10" cy="13" r="4" fill="#4a544a"/></svg>
<span class="tt" style="left:158.4px;letter-spacing:0.59px;">br.com.mywhatsapp2</span>
<span class="tt suf" style="left:433.2px;letter-spacing:0.34px">(androidTest)</span>
</div>
<div class="row tst" style="top:1362px">
<svg style="position:absolute;left:89px;top:11px;" width="11" height="18" viewBox="0 0 11 18"><path d="M1.2 1L9.2 9L1.2 17" fill="none" stroke="#a4a6a8" stroke-width="2.4"/></svg>
<svg style="position:absolute;left:122px;top:8px;" width="28" height="22" viewBox="0 0 28 22"><path d="M0 0H9.6L13.6 4H28V22H0Z" fill="#87939a"/><circle cx="10" cy="13" r="4" fill="#4a544a"/></svg>
<span class="tt" style="left:158.4px;letter-spacing:0.59px;">br.com.mywhatsapp2</span>
<span class="tt suf" style="left:433.2px;letter-spacing:0.42px">(test)</span>
</div>
<div class="row" style="top:1402px">
<svg style="position:absolute;left:53px;top:11px;" width="11" height="18" viewBox="0 0 11 18"><path d="M1.2 1L9.2 9L1.2 17" fill="none" stroke="#a4a6a8" stroke-width="2.4"/></svg>
<svg style="position:absolute;left:86px;top:8px;overflow:visible;" width="34" height="30" viewBox="0 0 34 30"><path d="M0 0H9.6L13.6 4H28V22H0Z" fill="#3e86a0"/><circle cx="21" cy="18" r="10.8" fill="#3c3f41"/><circle cx="21" cy="18" r="9.2" fill="#9aa7b0"/><g transform="translate(21,18)" fill="none" stroke="#3c3f41" stroke-width="1.5"><path transform="rotate(0)" d="M0 0C-3.4 -2.6 -3.4 -6.6 0.4 -9.4"/><path transform="rotate(60)" d="M0 0C-3.4 -2.6 -3.4 -6.6 0.4 -9.4"/><path transform="rotate(120)" d="M0 0C-3.4 -2.6 -3.4 -6.6 0.4 -9.4"/><path transform="rotate(180)" d="M0 0C-3.4 -2.6 -3.4 -6.6 0.4 -9.4"/><path transform="rotate(240)" d="M0 0C-3.4 -2.6 -3.4 -6.6 0.4 -9.4"/><path transform="rotate(300)" d="M0 0C-3.4 -2.6 -3.4 -6.6 0.4 -9.4"/></g></svg>
<span class="tt" style="left:122.4px;letter-spacing:-0.38px;">java</span>
<span class="tt suf" style="left:179.5px;letter-spacing:0.31px">(generated)</span>
</div>
<div class="row" style="top:1442px">
<svg style="position:absolute;left:50px;top:14px;" width="18" height="11" viewBox="0 0 18 11"><path d="M1 1.2L9 9.2L17 1.2" fill="none" stroke="#a4a6a8" stroke-width="2.4"/></svg>
<svg style="position:absolute;left:86px;top:8px;overflow:visible;" width="34" height="30" viewBox="0 0 34 30"><path d="M0 0H9.6L13.6 4H28V22H0Z" fill="#87939a"/><rect x="16" y="11.6" width="16" height="19" fill="#3c3f41"/><rect x="18" y="13.9" width="12.3" height="2.2" fill="#f4af3d"/><rect x="18" y="18.0" width="12.3" height="2.2" fill="#f4af3d"/><rect x="18" y="22.1" width="12.3" height="2.2" fill="#f4af3d"/><rect x="18" y="26.2" width="12.3" height="2.2" fill="#f4af3d"/></svg>
<span class="tt" style="left:122.4px;letter-spacing:0.13px;">res</span>
</div>
<div class="row" style="top:1482px">
<svg style="position:absolute;left:86px;top:14px;" width="18" height="11" viewBox="0 0 18 11"><path d="M1 1.2L9 9.2L17 1.2" fill="none" stroke="#a4a6a8" stroke-width="2.4"/></svg>
<svg style="position:absolute;left:122px;top:8px;" width="28" height="22" viewBox="0 0 28 22"><path d="M0 0H9.6L13.6 4H28V22H0Z" fill="#87939a"/><circle cx="10" cy="13" r="4" fill="#3c3f41"/></svg>
<span class="tt" style="left:158.4px;letter-spacing:0.33px;">drawable</span>
</div>
<div class="row" style="top:1522px">
<svg style="position:absolute;left:158px;top:5.8px;" width="30" height="31" viewBox="0 0 30 31"><path d="M4 8.1L12 0V8.1Z" fill="#87939a"/><path d="M13.8 0H24.1V14.3H4V9.8H13.8Z" fill="#87939a"/><rect x="0" y="16.2" width="30" height="14" fill="#c25d2c"/><path d="M10 18.8L4.6 23.3L10 27.9M14.2 18.8L19.6 23.3L14.2 27.9" fill="none" stroke="#55290f" stroke-width="1.9"/></svg>
<span class="tt" style="left:194.4px;letter-spacing:0.36px;">box_info.xml</span>
<span class="tt suf" style="left:359.4px;letter-spacing:0.30px">(v24)</span>
</div>
<div class="row" style="top:1562px">
<svg style="position:absolute;left:158px;top:5.8px;" width="30" height="31" viewBox="0 0 30 31"><path d="M4 8.1L12 0V8.1Z" fill="#87939a"/><path d="M13.8 0H24.1V14.3H4V9.8H13.8Z" fill="#87939a"/><rect x="0" y="16.2" width="30" height="14" fill="#c25d2c"/><path d="M10 18.8L4.6 23.3L10 27.9M14.2 18.8L19.6 23.3L14.2 27.9" fill="none" stroke="#55290f" stroke-width="1.9"/></svg>
<span class="tt" style="left:194.4px;letter-spacing:0.24px;">box_mensagem.xml</span>
<span class="tt suf" style="left:449.0px;letter-spacing:0.30px">(v24)</span>
</div>
<div class="row" style="top:1602px">
<svg style="position:absolute;left:158px;top:5.8px;" width="30" height="31" viewBox="0 0 30 31"><path d="M4 8.1L12 0V8.1Z" fill="#87939a"/><path d="M13.8 0H24.1V14.3H4V9.8H13.8Z" fill="#87939a"/><rect x="0" y="16.2" width="30" height="14" fill="#c25d2c"/><path d="M10 18.8L4.6 23.3L10 27.9M14.2 18.8L19.6 23.3L14.2 27.9" fill="none" stroke="#55290f" stroke-width="1.9"/></svg>
<span class="tt" style="left:194.4px;letter-spacing:0.51px;">box_white.xml</span>
<span class="tt suf" style="left:381.2px;letter-spacing:0.30px">(v24)</span>
</div>
<div class="row" style="top:1642px">
<svg style="position:absolute;left:158px;top:5.8px;" width="30" height="31" viewBox="0 0 30 31"><path d="M4 8.1L12 0V8.1Z" fill="#87939a"/><path d="M13.8 0H24.1V28.1H4V9.8H13.8Z" fill="#87939a"/><rect x="6" y="12.2" width="16.1" height="13.9" fill="#3c3f41"/><rect x="7.7" y="14" width="12.7" height="10.4" fill="#40a4c8"/><path d="M7.7 24.4V19.6L12 16.8L20.4 21.6V24.4Z" fill="#5a9e45"/><path d="M7.7 19.6L12 16.8L20.4 21.6" fill="none" stroke="#3c3f41" stroke-width="1"/><rect x="16" y="15.6" width="1.9" height="1.9" fill="#3c3f41"/></svg>
<span class="tt" style="left:194.4px;letter-spacing:0.37px;">carro.jpg</span>
<span class="tt suf" style="left:311.9px;letter-spacing:0.30px">(v24)</span>
</div>
<div class="row" style="top:1682px">
<svg style="position:absolute;left:158px;top:5.8px;" width="30" height="31" viewBox="0 0 30 31"><path d="M4 8.1L12 0V8.1Z" fill="#87939a"/><path d="M13.8 0H24.1V14.3H4V9.8H13.8Z" fill="#87939a"/><rect x="0" y="16.2" width="30" height="14" fill="#c25d2c"/><path d="M10 18.8L4.6 23.3L10 27.9M14.2 18.8L19.6 23.3L14.2 27.9" fill="none" stroke="#55290f" stroke-width="1.9"/></svg>
<span class="tt" style="left:194.4px;letter-spacing:0.48px;">ic_baseline_arrow_forward_24.xml</span>
<span class="tt suf" style="left:636.0px;letter-spacing:0.30px">(v24)</span>
</div>
<div class="row" style="top:1722px">
<svg style="position:absolute;left:158px;top:5.8px;" width="30" height="31" viewBox="0 0 30 31"><path d="M4 8.1L12 0V8.1Z" fill="#87939a"/><path d="M13.8 0H24.1V14.3H4V9.8H13.8Z" fill="#87939a"/><rect x="0" y="16.2" width="30" height="14" fill="#c25d2c"/><path d="M10 18.8L4.6 23.3L10 27.9M14.2 18.8L19.6 23.3L14.2 27.9" fill="none" stroke="#55290f" stroke-width="1.9"/></svg>
<span class="tt" style="left:194.4px;letter-spacing:0.49px;">ic_baseline_check_24.xml</span>
<span class="tt suf" style="left:530.5px;letter-spacing:0.30px">(v24)</span>
</div>
<div class="row" style="top:1762px">
<svg style="position:absolute;left:158px;top:5.8px;" width="30" height="31" viewBox="0 0 30 31"><path d="M4 8.1L12 0V8.1Z" fill="#87939a"/><path d="M13.8 0H24.1V14.3H4V9.8H13.8Z" fill="#87939a"/><rect x="0" y="16.2" width="30" height="14" fill="#c25d2c"/><path d="M10 18.8L4.6 23.3L10 27.9M14.2 18.8L19.6 23.3L14.2 27.9" fill="none" stroke="#55290f" stroke-width="1.9"/></svg>
<span class="tt" style="left:194.4px;letter-spacing:0.51px;">ic_baseline_edit_24.xml</span>
<span class="tt suf" style="left:503.5px;letter-spacing:0.30px">(v24)</span>
</div>
<div class="row" style="top:1802px">
<svg style="position:absolute;left:158px;top:5.8px;" width="30" height="31" viewBox="0 0 30 31"><path d="M4 8.1L12 0V8.1Z" fill="#87939a"/><path d="M13.8 0H24.1V14.3H4V9.8H13.8Z" fill="#87939a"/><rect x="0" y="16.2" width="30" height="14" fill="#c25d2c"/><path d="M10 18.8L4.6 23.3L10 27.9M14.2 18.8L19.6 23.3L14.2 27.9" fill="none" stroke="#55290f" stroke-width="1.9"/></svg>
<span class="tt" style="left:194.4px;letter-spacing:0.40px;">ic_baseline_image_24.xml</span>
<span class="tt suf" style="left:531.2px;letter-spacing:0.30px">(v24)</span>
</div>
<div class="row" style="top:1842px">
<svg style="position:absolute;left:158px;top:5.8px;" width="30" height="31" viewBox="0 0 30 31"><path d="M4 8.1L12 0V8.1Z" fill="#87939a"/><path d="M13.8 0H24.1V14.3H4V9.8H13.8Z" fill="#87939a"/><rect x="0" y="16.2" width="30" height="14" fill="#c25d2c"/><path d="M10 18.8L4.6 23.3L10 27.9M14.2 18.8L19.6 23.3L14.2 27.9" fill="none" stroke="#55290f" stroke-width="1.9"/></svg>
<span class="tt" style="left:194.4px;letter-spacing:0.43px;">ic_baseline_photo_camera_24.xml</span>
<span class="tt suf" style="left:634.2px;letter-spacing:0.30px">(v24)</span>
</div>
<div class="row" style="top:1882px">
<svg style="position:absolute;left:158px;top:5.8px;" width="30" height="31" viewBox="0 0 30 31"><path d="M4 8.1L12 0V8.1Z" fill="#87939a"/><path d="M13.8 0H24.1V14.3H4V9.8H13.8Z" fill="#87939a"/><rect x="0" y="16.2" width="30" height="14" fill="#c25d2c"/><path d="M10 18.8L4.6 23.3L10 27.9M14.2 18.8L19.6 23.3L14.2 27.9" fill="none" stroke="#55290f" stroke-width="1.9"/></svg>
<span class="tt" style="left:194.4px;letter-spacing:0.39px;">ic_baseline_search_24.xml</span>
<span class="tt suf" style="left:539.0px;letter-spacing:0.30px">(v24)</span>
</div>
<div class="row" style="top:1922px">
<svg style="position:absolute;left:158px;top:5.8px;" width="30" height="31" viewBox="0 0 30 31"><path d="M4 8.1L12 0V8.1Z" fill="#87939a"/><path d="M13.8 0H24.1V14.3H4V9.8H13.8Z" fill="#87939a"/><rect x="0" y="16.2" width="30" height="14" fill="#c25d2c"/><path d="M10 18.8L4.6 23.3L10 27.9M14.2 18.8L19.6 23.3L14.2 27.9" fill="none" stroke="#55290f" stroke-width="1.9"/></svg>
<span class="tt" style="left:194.4px;letter-spacing:0.42px;">ic_baseline_send_24.xml</span>
<span class="tt suf" style="left:516.4px;letter-spacing:0.30px">(v24)</span>
</div>
<div class="row" style="top:1962px">
<svg style="position:absolute;left:125px;top:11px;" width="11" height="18" viewBox="0 0 11 18"><path d="M1.2 1L9.2 9L1.2 17" fill="none" stroke="#a4a6a8" stroke-width="2.4"/></svg>
<svg style="position:absolute;left:158px;top:8px;" width="28" height="22" viewBox="0 0 28 22"><path d="M0 0H9.6L13.6 4H28V22H0Z" fill="#87939a"/><circle cx="10" cy="13" r="4" fill="#3c3f41"/></svg>
<span class="tt" style="left:194.4px;letter-spacing:0.48px;">ic_launcher_background</span>
<span class="tt suf" style="left:508.2px;letter-spacing:-0.33px">(2)</span>
</div>
<div class="row" style="top:2002px">
<svg style="position:absolute;left:158px;top:5.8px;" width="30" height="31" viewBox="0 0 30 31"><path d="M4 8.1L12 0V8.1Z" fill="#87939a"/><path d="M13.8 0H24.1V14.3H4V9.8H13.8Z" fill="#87939a"/><rect x="0" y="16.2" width="30" height="14" fill="#c25d2c"/><path d="M10 18.8L4.6 23.3L10 27.9M14.2 18.8L19.6 23.3L14.2 27.9" fill="none" stroke="#55290f" stroke-width="1.9"/></svg>
<span class="tt" style="left:194.4px;letter-spacing:0.47px;">ic_launcher_foreground.xml</span>
<span class="tt suf" style="left:549.0px;letter-spacing:0.30px">(v24)</span>
</div></div><div class="abs" style="left:668px;top:54px;width:28px;height:2016px;background:#3e4144"></div>
<div class="abs" style="left:674px;top:60px;width:16px;height:1092px;border-radius:8px;background:#565759;box-shadow:0 0 0 1.5px #36383b"></div>
<div class="abs" style="left:0;top:2070px;width:696px;height:28px;background:#3e4144"></div>
<div class="abs" style="left:5px;top:2075px;width:494px;height:18px;border-radius:9px;background:#565759;box-shadow:0 0 0 1.5px #36383b"></div></div><div id="projr"></div>
<div id="ed"><div id="tabs"><div class="abs" style="left:370px;top:0;width:338px;height:52px;background:#4e5254"></div>
<svg style="position:absolute;left:18px;top:12px;overflow:visible;" width="28" height="28" viewBox="0 0 28 28"><circle cx="14" cy="14" r="14.1" fill="#3e88a5"/><path d="M19.2 10.4 A5.6 5.6 0 1 0 19.2 17.8" fill="none" stroke="#23495a" stroke-width="2.1"/></svg>
<div class="t" style="left:55.0px;top:11.7px;font-size:22.4px;line-height:29px;color:#bbbbbb;letter-spacing:0.07px;">ConfiguracaoFirebase.java</div>
<svg style="position:absolute;left:340px;top:18px;" width="16" height="16" viewBox="0 0 16 16"><path d="M1 1L15 15M15 1L1 15" stroke="#74787a" stroke-width="1.6"/></svg>
<svg style="position:absolute;left:388px;top:12px;overflow:visible;" width="28" height="28" viewBox="0 0 28 28"><circle cx="14" cy="14" r="14.1" fill="#3e88a5"/><path d="M19.2 10.4 A5.6 5.6 0 1 0 19.2 17.8" fill="none" stroke="#23495a" stroke-width="2.1"/></svg>
<div class="t" style="left:425.0px;top:11.7px;font-size:22.4px;line-height:29px;color:#bbbbbb;letter-spacing:0.13px;">ContatosFragment.java</div>
<svg style="position:absolute;left:677px;top:18px;" width="16" height="16" viewBox="0 0 16 16"><path d="M1 1L15 15M15 1L1 15" stroke="#74787a" stroke-width="1.6"/></svg></div><div id="tabsb"></div><div class="abs" style="left:370px;top:47.5px;width:338px;height:6px;background:#4a88c7"></div><div id="edc"><div id="gut"></div><div id="gutl"></div><div class="guide" style="left:1762px;top:0;height:2044px;background:#4d4d4d"></div>
<div class="guide" style="left:222px;top:484px;height:42px"></div>
<div class="guide" style="left:222px;top:694px;height:1350px"></div>
<div class="guide" style="left:286px;top:1450px;height:594px"></div>
<div class="guide" style="left:414px;top:1492px;height:552px"></div>
<div class="guide" style="left:542px;top:1618px;height:426px"></div>
<div class="guide" style="left:606px;top:1702px;height:342px"></div>
<div class="guide" style="left:670px;top:1912px;height:84px"></div>
<div class="guide" style="left:670px;top:2038px;height:6px"></div>
<svg style="position:absolute;left:141px;top:455px;" width="18" height="22.2" viewBox="0 0 18 22.2"><path d="M1 1H17V13.6L9 21L1 13.6Z" fill="#2b2b2b" stroke="#5f6162" stroke-width="1.9"/><path d="M4 9H14" stroke="#6a6c6d" stroke-width="2"/></svg>
<svg style="position:absolute;left:141px;top:707px;" width="18" height="22.2" viewBox="0 0 18 22.2"><path d="M1 1H17V13.6L9 21L1 13.6Z" fill="#2b2b2b" stroke="#5f6162" stroke-width="1.9"/><path d="M4 9H14" stroke="#6a6c6d" stroke-width="2"/></svg>
<svg style="position:absolute;left:141px;top:1589px;" width="18" height="22.2" viewBox="0 0 18 22.2"><path d="M1 1H17V13.6L9 21L1 13.6Z" fill="#2b2b2b" stroke="#5f6162" stroke-width="1.9"/><path d="M4 9H14" stroke="#6a6c6d" stroke-width="2"/></svg>
<svg style="position:absolute;left:141px;top:1673px;" width="18" height="22.2" viewBox="0 0 18 22.2"><path d="M1 1H17V13.6L9 21L1 13.6Z" fill="#2b2b2b" stroke="#5f6162" stroke-width="1.9"/><path d="M4 9H14" stroke="#6a6c6d" stroke-width="2"/></svg>
<svg style="position:absolute;left:141px;top:1883px;" width="18" height="22.2" viewBox="0 0 18 22.2"><path d="M1 1H17V13.6L9 21L1 13.6Z" fill="#2b2b2b" stroke="#5f6162" stroke-width="1.9"/><path d="M4 9H14" stroke="#6a6c6d" stroke-width="2"/></svg>
<svg style="position:absolute;left:141px;top:534.8px;" width="18" height="22.2" viewBox="0 0 18 22.2"><path d="M1 21.2H17V8.6L9 1.2L1 8.6Z" fill="#2b2b2b" stroke="#5f6162" stroke-width="1.9"/><path d="M4 13.2H14" stroke="#6a6c6d" stroke-width="2"/></svg>
<svg style="position:absolute;left:141px;top:2004.8px;" width="18" height="22.2" viewBox="0 0 18 22.2"><path d="M1 21.2H17V8.6L9 1.2L1 8.6Z" fill="#2b2b2b" stroke="#5f6162" stroke-width="1.9"/><path d="M4 13.2H14" stroke="#6a6c6d" stroke-width="2"/></svg>
<svg style="position:absolute;left:90px;top:27.6px;" width="30" height="31" viewBox="0 0 30 31"><path d="M4 8.1L12 0V8.1Z" fill="#87939a"/><path d="M13.8 0H24.1V14.3H4V9.8H13.8Z" fill="#87939a"/><rect x="0" y="16.2" width="30" height="14" fill="#c25d2c"/><path d="M10 18.8L4.6 23.3L10 27.9M14.2 18.8L19.6 23.3L14.2 27.9" fill="none" stroke="#55290f" stroke-width="1.9"/></svg>
<svg style="position:absolute;left:65.5px;top:449px;" width="26" height="26" viewBox="0 0 26 26"><circle cx="8.5" cy="13.1" r="8.2" fill="#3e9ab9"/><circle cx="8.5" cy="13.1" r="3.2" fill="none" stroke="#24333b" stroke-width="1.8"/><path d="M19.5 25V6" stroke="#db5c5c" stroke-width="2.3"/><path d="M14.5 7L19.5 1L24.5 7Z" fill="#db5c5c"/></svg>
<svg style="position:absolute;left:65.5px;top:659px;" width="26" height="26" viewBox="0 0 26 26"><circle cx="8.5" cy="13.1" r="8.2" fill="#3e9ab9"/><circle cx="8.5" cy="13.1" r="3.2" fill="none" stroke="#24333b" stroke-width="1.8"/><path d="M19.5 25V6" stroke="#db5c5c" stroke-width="2.3"/><path d="M14.5 7L19.5 1L24.5 7Z" fill="#db5c5c"/></svg>
<svg style="position:absolute;left:65.5px;top:1667px;" width="26" height="26" viewBox="0 0 26 26"><circle cx="8.5" cy="13.1" r="8.2" fill="#59a869"/><path d="M6 9.4H11M8.5 9.4V16.8M6 16.8H11" stroke="#1f3b25" stroke-width="1.8" fill="none"/><path d="M19.5 25V6" stroke="#db5c5c" stroke-width="2.3"/><path d="M14.5 7L19.5 1L24.5 7Z" fill="#db5c5c"/></svg>
<div class="t" style="left:97px;top:652px;font-size:25px;line-height:42px;color:#afb1b3">@</div><div class="ln" style="top:-20px">33</div>
<div class="ln" style="top:22px">34</div>
<div class="cl" style="top:22px"><span class="k">public</span> <span class="k">class</span> <span>Contatos</span>Fragment <span class="k">extends</span> Fragment {</div>
<svg style="position:absolute;left:370.1px;top:53.7px" width="129" height="6" viewBox="0 0 129 6"><path d="M0 4.6L4.0 0.6L8.0 4.6L12.0 0.6L16.0 4.6L20.0 0.6L24.0 4.6L28.0 0.6L32.0 4.6L36.0 0.6L40.0 4.6L44.0 0.6L48.0 4.6L52.0 0.6L56.0 4.6L60.0 0.6L64.0 4.6L68.0 0.6L72.0 4.6L76.0 0.6L80.0 4.6L84.0 0.6L88.0 4.6L92.0 0.6L96.0 4.6L100.0 0.6L104.0 4.6L108.0 0.6L112.0 4.6L116.0 0.6L120.0 4.6L124.0 0.6L128.0 4.6" fill="none" stroke="#5aa265" stroke-width="1.35"/></svg>
<div class="ln" style="top:64px">35</div>
<div class="ln" style="top:106px">36</div>
<div class="cl" style="top:106px">    <span class="k">private</span> RecyclerView <span class="h"><span class="f">recyclerView<span>Contatos</span></span></span><span class="k">;</span></div>
<svg style="position:absolute;left:754.1px;top:137.7px" width="129" height="6" viewBox="0 0 129 6"><path d="M0 4.6L4.0 0.6L8.0 4.6L12.0 0.6L16.0 4.6L20.0 0.6L24.0 4.6L28.0 0.6L32.0 4.6L36.0 0.6L40.0 4.6L44.0 0.6L48.0 4.6L52.0 0.6L56.0 4.6L60.0 0.6L64.0 4.6L68.0 0.6L72.0 4.6L76.0 0.6L80.0 4.6L84.0 0.6L88.0 4.6L92.0 0.6L96.0 4.6L100.0 0.6L104.0 4.6L108.0 0.6L112.0 4.6L116.0 0.6L120.0 4.6L124.0 0.6L128.0 4.6" fill="none" stroke="#5aa265" stroke-width="1.35"/></svg>
<div class="ln" style="top:148px">37</div>
<div class="cl" style="top:148px">    <span class="k">private</span> AdapterContato <span class="f">adapter</span><span class="k">;</span></div>
<div class="ln" style="top:190px">38</div>
<div class="cl" style="top:190px">    <span class="k">private</span> ArrayList&lt;Usuario&gt; <span class="h"><span class="f"><span>listaContatos</span></span></span> = <span class="k">new</span> ArrayList&lt;&gt;()<span class="k">;</span></div>
<svg style="position:absolute;left:658.1px;top:221.7px" width="209" height="6" viewBox="0 0 209 6"><path d="M0 4.6L4.0 0.6L8.0 4.6L12.0 0.6L16.0 4.6L20.0 0.6L24.0 4.6L28.0 0.6L32.0 4.6L36.0 0.6L40.0 4.6L44.0 0.6L48.0 4.6L52.0 0.6L56.0 4.6L60.0 0.6L64.0 4.6L68.0 0.6L72.0 4.6L76.0 0.6L80.0 4.6L84.0 0.6L88.0 4.6L92.0 0.6L96.0 4.6L100.0 0.6L104.0 4.6L108.0 0.6L112.0 4.6L116.0 0.6L120.0 4.6L124.0 0.6L128.0 4.6L132.0 0.6L136.0 4.6L140.0 0.6L144.0 4.6L148.0 0.6L152.0 4.6L156.0 0.6L160.0 4.6L164.0 0.6L168.0 4.6L172.0 0.6L176.0 4.6L180.0 0.6L184.0 4.6L188.0 0.6L192.0 4.6L196.0 0.6L200.0 4.6L204.0 0.6L208.0 4.6" fill="none" stroke="#5aa265" stroke-width="1.35"/></svg>
<div class="ln" style="top:232px">39</div>
<div class="cl" style="top:232px">    <span class="k">private</span> DatabaseReference <span class="f"><span>usuario</span>Ref</span><span class="k">;</span></div>
<svg style="position:absolute;left:642.1px;top:263.7px" width="113" height="6" viewBox="0 0 113 6"><path d="M0 4.6L4.0 0.6L8.0 4.6L12.0 0.6L16.0 4.6L20.0 0.6L24.0 4.6L28.0 0.6L32.0 4.6L36.0 0.6L40.0 4.6L44.0 0.6L48.0 4.6L52.0 0.6L56.0 4.6L60.0 0.6L64.0 4.6L68.0 0.6L72.0 4.6L76.0 0.6L80.0 4.6L84.0 0.6L88.0 4.6L92.0 0.6L96.0 4.6L100.0 0.6L104.0 4.6L108.0 0.6L112.0 4.6" fill="none" stroke="#5aa265" stroke-width="1.35"/></svg>
<div class="ln" style="top:274px">40</div>
<div class="cl" style="top:274px">    <span class="k">private</span> ValueEventListener <span class="f">valueEventListener<span>Contatos</span></span><span class="k">;</span></div>
<svg style="position:absolute;left:946.1px;top:305.7px" width="129" height="6" viewBox="0 0 129 6"><path d="M0 4.6L4.0 0.6L8.0 4.6L12.0 0.6L16.0 4.6L20.0 0.6L24.0 4.6L28.0 0.6L32.0 4.6L36.0 0.6L40.0 4.6L44.0 0.6L48.0 4.6L52.0 0.6L56.0 4.6L60.0 0.6L64.0 4.6L68.0 0.6L72.0 4.6L76.0 0.6L80.0 4.6L84.0 0.6L88.0 4.6L92.0 0.6L96.0 4.6L100.0 0.6L104.0 4.6L108.0 0.6L112.0 4.6L116.0 0.6L120.0 4.6L124.0 0.6L128.0 4.60" fill="none" stroke="#5aa265" stroke-width="1.35"/></svg>
<div class="ln" style="top:316px">41</div>
<div class="cl" style="top:316px">    <span class="k">private</span> FirebaseUser <span class="f"><span>usuario</span>App</span><span class="k">;</span></div>
<svg style="position:absolute;left:562.1px;top:347.7px" width="113" height="6" viewBox="0 0 113 6"><path d="M0 4.6L4.0 0.6L8.0 4.6L12.0 0.6L16.0 4.6L20.0 0.6L24.0 4.6L28.0 0.6L32.0 4.6L36.0 0.6L40.0 4.6L44.0 0.6L48.0 4.6L52.0 0.6L56.0 4.6L60.0 0.6L64.0 4.6L68.0 0.6L72.0 4.6L76.0 0.6L80.0 4.6L84.0 0.6L88.0 4.6L92.0 0.6L96.0 4.6L100.0 0.6L104.0 4.6L108.0 0.6L112.0 4.6" fill="none" stroke="#5aa265" stroke-width="1.35"/></svg>
<div class="ln" style="top:358px">42</div>
<div class="ln" style="top:400px">43</div>
<div class="cl" style="top:400px">    <span class="a">@Override</span></div>
<div class="ln" style="top:442px">44</div>
<div class="cl" style="top:442px">    <span class="k">public</span> <span class="k">void</span> <span class="m">onCreate</span>(Bundle savedInstanceState) {</div>
<div class="ln" style="top:484px">45</div>
<div class="cl" style="top:484px">        <span class="k">super</span>.onCreate(savedInstanceState)<span class="k">;</span></div>
<div class="ln" style="top:526px">46</div>
<div class="cl" style="top:526px">    }</div>
<div class="ln" style="top:568px">47</div>
<div class="ln" style="top:610px">48</div>
<div class="cl" style="top:610px">    <span class="a">@Override</span></div>
<div class="ln" style="top:652px">49</div>
<div class="cl" style="top:652px">    <span class="k">public</span> View <span class="m">onCreateView</span>(LayoutInflater inflater<span class="k">,</span> ViewGroup container<span class="k">,</span></div>
<div class="ln" style="top:694px">50</div>
<div class="cl" style="top:694px">                             Bundle savedInstanceState) {</div>
<div class="ln" style="top:736px">51</div>
<div class="cl" style="top:736px">        View view = inflater.inflate(R.layout.<span class="f"><span class="i">fragment_contatos</span></span><span class="k">,</span> container<span class="k">,</span> <span class="hint">attachToRoot:</span><span class="k">false</span>)<span class="k">;</span></div>
<div class="ln" style="top:778px">52</div>
<div class="ln" style="top:820px">53</div>
<div class="cl" style="top:820px">        <span class="f">recyclerViewContatos</span> = view.findViewById(R.id.<span class="f"><span class="i">recyclerViewContatos</span></span>)<span class="k">;</span></div>
<div class="ln" style="top:862px">54</div>
<div class="cl" style="top:862px">        <span class="f">usuarioRef</span> = ConfiguracaoFirebase.<span class="i">getFirebaseDatabase</span>().child(<span class="s">&quot;<span>usuarios</span>&quot;</span>)<span class="k">;</span></div>
<svg style="position:absolute;left:1298.1px;top:893.7px" width="129" height="6" viewBox="0 0 129 6"><path d="M0 4.6L4.0 0.6L8.0 4.6L12.0 0.6L16.0 4.6L20.0 0.6L24.0 4.6L28.0 0.6L32.0 4.6L36.0 0.6L40.0 4.6L44.0 0.6L48.0 4.6L52.0 0.6L56.0 4.6L60.0 0.6L64.0 4.6L68.0 0.6L72.0 4.6L76.0 0.6L80.0 4.6L84.0 0.6L88.0 4.6L92.0 0.6L96.0 4.6L100.0 0.6L104.0 4.6L108.0 0.6L112.0 4.6L116.0 0.6L120.0 4.6L124.0 0.6L128.0 4.6" fill="none" stroke="#5aa265" stroke-width="1.35"/></svg>
<div class="ln" style="top:904px">55</div>
<div class="cl" style="top:904px">        <span class="f">usuarioApp</span> = UsuarioFirebase.<span class="i">getUsuarioAtual</span>()<span class="k">;</span></div>
<div class="ln" style="top:946px">56</div>
<div class="ln" style="top:988px">57</div>
<div class="cl" style="top:988px">        <span class="c">//adapter recycler</span></div>
<div class="ln" style="top:1030px">58</div>
<div class="cl" style="top:1030px">        <span class="f">adapter</span> = <span class="k">new</span> AdapterContato(<span class="f">listaContatos</span><span class="k">,</span> getActivity())<span class="k">;</span></div>
<div class="ln" style="top:1072px">59</div>
<div class="ln" style="top:1114px">60</div>
<div class="cl" style="top:1114px">        <span class="c">//<span>configuracao</span> recycler</span></div>
<svg style="position:absolute;left:322.1px;top:1145.7px" width="193" height="6" viewBox="0 0 193 6"><path d="M0 4.6L4.0 0.6L8.0 4.6L12.0 0.6L16.0 4.6L20.0 0.6L24.0 4.6L28.0 0.6L32.0 4.6L36.0 0.6L40.0 4.6L44.0 0.6L48.0 4.6L52.0 0.6L56.0 4.6L60.0 0.6L64.0 4.6L68.0 0.6L72.0 4.6L76.0 0.6L80.0 4.6L84.0 0.6L88.0 4.6L92.0 0.6L96.0 4.6L100.0 0.6L104.0 4.6L108.0 0.6L112.0 4.6L116.0 0.6L120.0 4.6L124.0 0.6L128.0 4.6L132.0 0.6L136.0 4.6L140.0 0.6L144.0 4.6L148.0 0.6L152.0 4.6L156.0 0.6L160.0 4.6L164.0 0.6L168.0 4.6L172.0 0.6L176.0 4.6L180.0 0.6L184.0 4.6L188.0 0.6L192.0 4.6" fill="none" stroke="#5aa265" stroke-width="1.35"/></svg>
<div class="ln" style="top:1156px">61</div>
<div class="cl" style="top:1156px">        RecyclerView.LayoutManager layoutManager = <span class="k">new</span> LinearLayoutManager(getActivity())<span class="k">;</span></div>
<div class="ln" style="top:1198px">62</div>
<div class="cl" style="top:1198px">        <span class="f">recyclerViewContatos</span>.setLayoutManager(layoutManager)<span class="k">;</span></div>
<div class="ln" style="top:1240px">63</div>
<div class="cl" style="top:1240px">        <span class="f">recyclerViewContatos</span>.setHasFixedSize(<span class="k">true</span>)<span class="k">;</span></div>
<div class="ln" style="top:1282px">64</div>
<div class="cl" style="top:1282px">        <span class="f">recyclerViewContatos</span>.setAdapter(<span class="f">adapter</span>)<span class="k">;</span></div>
<div class="ln" style="top:1324px">65</div>
<div class="ln" style="top:1366px">66</div>
<div class="cl" style="top:1366px">        <span class="c">//<span>configurar</span> <span>evento</span> de clique no recyclerView</span></div>
<svg style="position:absolute;left:322.1px;top:1397.7px" width="161" height="6" viewBox="0 0 161 6"><path d="M0 4.6L4.0 0.6L8.0 4.6L12.0 0.6L16.0 4.6L20.0 0.6L24.0 4.6L28.0 0.6L32.0 4.6L36.0 0.6L40.0 4.6L44.0 0.6L48.0 4.6L52.0 0.6L56.0 4.6L60.0 0.6L64.0 4.6L68.0 0.6L72.0 4.6L76.0 0.6L80.0 4.6L84.0 0.6L88.0 4.6L92.0 0.6L96.0 4.6L100.0 0.6L104.0 4.6L108.0 0.6L112.0 4.6L116.0 0.6L120.0 4.6L124.0 0.6L128.0 4.6L132.0 0.6L136.0 4.6L140.0 0.6L144.0 4.6L148.0 0.6L152.0 4.6L156.0 0.6L160.0 4.6" fill="none" stroke="#5aa265" stroke-width="1.35"/></svg>
<svg style="position:absolute;left:498.1px;top:1397.7px" width="97" height="6" viewBox="0 0 97 6"><path d="M0 4.6L4.0 0.6L8.0 4.6L12.0 0.6L16.0 4.6L20.0 0.6L24.0 4.6L28.0 0.6L32.0 4.6L36.0 0.6L40.0 4.6L44.0 0.6L48.0 4.6L52.0 0.6L56.0 4.6L60.0 0.6L64.0 4.6L68.0 0.6L72.0 4.6L76.0 0.6L80.0 4.6L84.0 0.6L88.0 4.6L92.0 0.6L96.0 4.6" fill="none" stroke="#5aa265" stroke-width="1.35"/></svg>
<div class="ln" style="top:1408px">67</div>
<div class="cl" style="top:1408px">        <span class="f">recyclerViewContatos</span>.addOnItemTouchListener(</div>
<div class="ln" style="top:1450px">68</div>
<div class="cl" style="top:1450px">                <span class="k">new</span> RecyclerItemClickListener(</div>
<div class="ln" style="top:1492px">69</div>
<div class="cl" style="top:1492px">                        getActivity()<span class="k">,</span></div>
<div class="ln" style="top:1534px">70</div>
<div class="cl" style="top:1534px">                        <span class="f">recyclerViewContatos</span><span class="k">,</span></div>
<div class="ln" style="top:1576px">71</div>
<div class="cl" style="top:1576px">                        <span class="k">new</span> RecyclerItemClickListener.OnItemClickListener() {</div>
<div class="ln" style="top:1618px">72</div>
<div class="cl" style="top:1618px">                            <span class="a">@Override</span></div>
<div class="ln" style="top:1660px">73</div>
<div class="cl" style="top:1660px">                            <span class="k">public</span> <span class="k">void</span> <span class="m">onItemClick</span>(View view<span class="k">,</span> <span class="k">int</span> position) {</div>
<div class="ln" style="top:1702px">74</div>
<div class="ln" style="top:1744px">75</div>
<div class="cl" style="top:1744px">                                Usuario <span>usuarioSelecionado</span> = <span class="f">listaContatos</span>.get(position)<span class="k">;</span></div>
<svg style="position:absolute;left:802.1px;top:1775.7px" width="289" height="6" viewBox="0 0 289 6"><path d="M0 4.6L4.0 0.6L8.0 4.6L12.0 0.6L16.0 4.6L20.0 0.6L24.0 4.6L28.0 0.6L32.0 4.6L36.0 0.6L40.0 4.6L44.0 0.6L48.0 4.6L52.0 0.6L56.0 4.6L60.0 0.6L64.0 4.6L68.0 0.6L72.0 4.6L76.0 0.6L80.0 4.6L84.0 0.6L88.0 4.6L92.0 0.6L96.0 4.6L100.0 0.6L104.0 4.6L108.0 0.6L112.0 4.6L116.0 0.6L120.0 4.6L124.0 0.6L128.0 4.6L132.0 0.6L136.0 4.6L140.0 0.6L144.0 4.6L148.0 0.6L152.0 4.6L156.0 0.6L160.0 4.6L164.0 0.6L168.0 4.6L172.0 0.6L176.0 4.6L180.0 0.6L184.0 4.6L188.0 0.6L192.0 4.6L196.0 0.6L200.0 4.6L204.0 0.6L208.0 4.6L212.0 0.6L216.0 4.6L220.0 0.6L224.0 4.6L228.0 0.6L232.0 4.6L236.0 0.6L240.0 4.6L244.0 0.6L248.0 4.6L252.0 0.6L256.0 4.6L260.0 0.6L264.0 4.6L268.0 0.6L272.0 4.6L276.0 0.6L280.0 4.6L284.0 0.6L288.0 4.60" fill="none" stroke="#5aa265" stroke-width="1.35"/></svg>
<div class="ln" style="top:1786px">76</div>
<div class="cl" style="top:1786px">                                <span class="k">boolean</span> <span>cabecalho</span> = usuarioSelecionado.getEmail().isEmpty()<span class="k">;</span></div>
<svg style="position:absolute;left:802.1px;top:1817.7px" width="145" height="6" viewBox="0 0 145 6"><path d="M0 4.6L4.0 0.6L8.0 4.6L12.0 0.6L16.0 4.6L20.0 0.6L24.0 4.6L28.0 0.6L32.0 4.6L36.0 0.6L40.0 4.6L44.0 0.6L48.0 4.6L52.0 0.6L56.0 4.6L60.0 0.6L64.0 4.6L68.0 0.6L72.0 4.6L76.0 0.6L80.0 4.6L84.0 0.6L88.0 4.6L92.0 0.6L96.0 4.6L100.0 0.6L104.0 4.6L108.0 0.6L112.0 4.6L116.0 0.6L120.0 4.6L124.0 0.6L128.0 4.6L132.0 0.6L136.0 4.6L140.0 0.6L144.0 4.6" fill="none" stroke="#5aa265" stroke-width="1.35"/></svg>
<div class="ln" style="top:1828px">77</div>
<div class="ln" style="top:1870px">78</div>
<div class="cl" style="top:1870px">                                <span class="k"><span>if</span></span> (cabecalho){</div>
<svg style="position:absolute;left:674.1px;top:1901.7px" width="33" height="6" viewBox="0 0 33 6"><path d="M0 4.6L4.0 0.6L8.0 4.6L12.0 0.6L16.0 4.6L20.0 0.6L24.0 4.6L28.0 0.6L32.0 4.6" fill="none" stroke="#aaa95c" stroke-width="1.35"/></svg>
<div class="ln" style="top:1912px">79</div>
<div class="cl" style="top:1912px">                                    Intent i = <span class="k">new</span> Intent(getActivity()<span class="k">,</span> GrupoActivity.<span class="k">class</span>)<span class="k">;</span></div>
<div class="ln" style="top:1954px">80</div>
<div class="cl" style="top:1954px">                                    startActivity(i)<span class="k">;</span></div>
<div class="ln" style="top:1996px">81</div>
<div class="cl" style="top:1996px">                                }<span class="k">else</span>{</div><div class="abs" style="left:2780px;top:126px;width:16px;height:759.7px;border-radius:8px;background:#484848;box-shadow:0 0 0 1.5px #272727"></div>
<div class="abs" style="left:2774px;top:162.2px;width:28px;height:4px;background:#b8962a"></div>
<div class="abs" style="left:2774px;top:194px;width:28px;height:4px;background:#b8962a"></div>
<div class="abs" style="left:2774px;top:826px;width:28px;height:4px;background:#7a7358"></div>
<div class="abs" style="left:2774px;top:1711.5px;width:28px;height:4px;background:#c29e1d"></div>
<div class="abs" style="left:2774px;top:1789.5px;width:28px;height:4px;background:#c29e1d"></div>
<svg style="position:absolute;left:2532px;top:14.5px;" width="24" height="22" viewBox="0 0 24 22"><path d="M12 0L24 22H0Z" fill="#d9a21b"/><rect x="10.4" y="7.6" width="3.4" height="6.6" fill="#2b2b2b"/><rect x="10.4" y="16" width="3.4" height="3.4" fill="#2b2b2b"/></svg>
<div class="t" style="left:2562.0px;top:11.7px;font-size:22.5px;line-height:29px;color:#bbbbbb;">5</div>
<svg style="position:absolute;left:2592px;top:14.5px;" width="24" height="22" viewBox="0 0 24 22"><path d="M12 0L24 22H0Z" fill="#86805f"/><rect x="10.4" y="7.6" width="3.4" height="6.6" fill="#2b2b2b"/><rect x="10.4" y="16" width="3.4" height="3.4" fill="#2b2b2b"/></svg>
<div class="t" style="left:2621.0px;top:11.7px;font-size:22.5px;line-height:29px;color:#bbbbbb;">1</div>
<svg style="position:absolute;left:2648px;top:15px;" width="24" height="26" viewBox="0 0 24 26"><path d="M1.5 10L8 17L21.5 2.5" fill="none" stroke="#499c54" stroke-width="4.6"/><path d="M0.8 23.5L5.4 19.5L9.2 23.5L13.6 19.5L17.6 23.5L22.4 19" fill="none" stroke="#499c54" stroke-width="1.8"/></svg>
<div class="t" style="left:2678.0px;top:11.7px;font-size:22.5px;line-height:29px;color:#bbbbbb;letter-spacing:1.49px;">34</div>
<svg style="position:absolute;left:2727px;top:20px;" width="18" height="11" viewBox="0 0 18 11"><path d="M1 9.8L9 1.8L17 9.8" fill="none" stroke="#afb1b3" stroke-width="2.4"/></svg>
<svg style="position:absolute;left:2769px;top:21px;" width="18" height="11" viewBox="0 0 18 11"><path d="M1 1.2L9 9.2L17 1.2" fill="none" stroke="#afb1b3" stroke-width="2.4"/></svg></div></div>
<div id="rstripb"></div><div id="rstrip"></div>
<svg style="position:absolute;left:3550px;top:78.5px;overflow:visible;" width="26.5" height="19.875" viewBox="0 0 32 24"><g transform="translate(-14,-12)"><path d="M14.9 34.7C14.5 27 17 20 21 17.6C24 16 29 16.4 32 17.2C34 18 36 19.6 38.4 19.6C40.4 19.6 41.8 18.2 41.6 16.6C41.4 15 39.6 14.2 38 15L36.6 14.4C38.4 12.4 42 12.4 43.8 14.6C45.8 17.2 45.2 21.4 42.6 24.6L39.6 28V34.7H35.6C35.6 31.4 31.4 31.4 31.4 34.7H29.4C29.4 31.4 25.2 31.4 25.2 34.7H23.2C23.2 31.4 19 31.4 19 34.7Z" fill="#afb1b3"/><path d="M21.6 21.2C23.4 24.6 26.4 25 29.4 22.2" fill="none" stroke="#3c3f41" stroke-width="1"/><circle cx="35.2" cy="21.8" r="0.9" fill="#3c3f41"/></g></svg>
<div class="vt" style="left:3575.7px;top:110.0px;font-size:22px;line-height:26px;color:#bbbbbb;transform:rotate(90deg);letter-spacing:0.16px;">Gradle</div>
<svg style="position:absolute;left:3553px;top:1732px;" width="20" height="27" viewBox="0 0 20 27"><path d="M2.4 0H17.6A2.4 2.4 0 0 1 20 2.4V24.6A2.4 2.4 0 0 1 17.6 27H2.4A2.4 2.4 0 0 1 0 24.6V2.4A2.4 2.4 0 0 1 2.4 0ZM2.6 2.6V21H17.4V2.6Z" fill="#afb1b3" fill-rule="evenodd"/><rect x="8" y="22.6" width="6" height="2.4" fill="#3c3f41"/></svg>
<div class="vt" style="left:3575.7px;top:1767.0px;font-size:22px;line-height:26px;color:#bbbbbb;transform:rotate(90deg);letter-spacing:0.01px;">Device File Explorer</div>
<svg style="position:absolute;left:3553px;top:2012px;" width="21" height="25" viewBox="0 0 21 25"><path d="M0 0H14V2.6H2.6V18.4H8V21H0Z" fill="#afb1b3"/><rect x="11.2" y="5.2" width="6.6" height="8" fill="none" stroke="#afb1b3" stroke-width="1.8"/><rect x="10" y="22.4" width="11" height="2.2" fill="#afb1b3"/></svg>
<div class="vt" style="left:3575.7px;top:2045.5px;font-size:22px;line-height:26px;color:#bbbbbb;transform:rotate(90deg);letter-spacing:0.31px;">Emulator</div>
<div id="bbar"></div><div id="sbar"></div>
<div class="t" style="left:94.5px;top:2164.0px;font-size:22.4px;line-height:29px;color:#bbbbbb;letter-spacing:-0.95px;">TODO</div>
<div class="t" style="left:229.5px;top:2164.0px;font-size:22.4px;line-height:29px;color:#bbbbbb;letter-spacing:0.09px;">Problems</div>
<div class="t" style="left:402.0px;top:2164.0px;font-size:22.4px;line-height:29px;color:#bbbbbb;letter-spacing:0.02px;">Terminal</div>
<div class="t" style="left:561.6px;top:2164.0px;font-size:22.4px;line-height:29px;color:#bbbbbb;letter-spacing:0.39px;">Logcat</div>
<div class="t" style="left:705.5px;top:2164.0px;font-size:22.4px;line-height:29px;color:#bbbbbb;letter-spacing:0.06px;">Build</div>
<div class="t" style="left:829.5px;top:2164.0px;font-size:22.4px;line-height:29px;color:#bbbbbb;letter-spacing:0.31px;">Profiler</div>
<div class="t" style="left:973.6px;top:2164.0px;font-size:22.4px;line-height:29px;color:#bbbbbb;letter-spacing:-0.56px;">Run</div>
<div class="t" style="left:1089.9px;top:2164.0px;font-size:22.4px;line-height:29px;color:#bbbbbb;letter-spacing:0.23px;">App Inspection</div>
<div class="t" style="left:3168.0px;top:2164.0px;font-size:22.4px;line-height:29px;color:#bbbbbb;letter-spacing:-0.18px;">Event Log</div>
<div class="t" style="left:3347.9px;top:2164.0px;font-size:22.4px;line-height:29px;color:#bbbbbb;letter-spacing:0.25px;">Layout Inspector</div>
<svg style="position:absolute;left:63.5px;top:2168px;" width="21" height="18" viewBox="0 0 21 18"><g fill="#afb1b3"><rect x="0" y="0" width="4" height="3.6"/><rect x="0" y="7" width="4" height="3.6"/><rect x="0" y="14" width="4" height="3.6"/><rect x="6.4" y="0" width="14.6" height="3.6"/><rect x="6.4" y="7" width="14.6" height="3.6"/><rect x="6.4" y="14" width="14.6" height="3.6"/></g></svg>
<svg style="position:absolute;left:198.7px;top:2167px;" width="21.4" height="21.4" viewBox="0 0 21.4 21.4"><circle cx="10.7" cy="10.7" r="10.7" fill="#afb1b3"/><rect x="9.1" y="4.4" width="3.2" height="8.2" fill="#3c3f41"/><rect x="9.1" y="14.4" width="3.2" height="3.2" fill="#3c3f41"/></svg>
<svg style="position:absolute;left:369.7px;top:2167.5px;" width="23" height="20" viewBox="0 0 23 20"><rect width="23" height="20" fill="#afb1b3"/><path d="M4 5L9.4 10L4 15" fill="none" stroke="#3c3f41" stroke-width="2.4"/><rect x="11" y="14" width="7.4" height="2.4" fill="#3c3f41"/></svg>
<svg style="position:absolute;left:529.4px;top:2172px;" width="23" height="16" viewBox="0 0 23 16"><g fill="#afb1b3"><rect x="0" y="0" width="23" height="3.6"/><rect x="0" y="6.2" width="14" height="3.6"/><rect x="0" y="12.4" width="18.6" height="3.6"/></g></svg>
<svg style="position:absolute;left:670.6px;top:2165px;" width="28.4" height="26" viewBox="0 0 33 30"><path d="M1 12L12.1 1L19.1 1.2V2.6L13 7.5L19.7 13.2L20.7 13.7L31.1 24L26.5 28.9L16 18.6V17L9.2 11L5.4 16.1Z" fill="#afb1b3"/></svg>
<svg style="position:absolute;left:795.5px;top:2169.5px;" width="27.5" height="18.5" viewBox="0 0 27.5 18.5"><path d="M2.2 18A11.6 11.6 0 0 1 15.6 4.2" fill="none" stroke="#afb1b3" stroke-width="3.8"/><path d="M22.4 7.6A11.6 11.6 0 0 1 25.4 18" fill="none" stroke="#afb1b3" stroke-width="3.8"/><path d="M20.8 3.4L15.4 16.6A2.4 2.4 0 0 1 11.2 14.8Z" fill="#afb1b3"/></svg>
<svg style="position:absolute;left:943.4px;top:2168px;" width="17" height="21" viewBox="0 0 17 21"><path d="M0 0L17 10.5L0 21Z" fill="#afb1b3"/></svg>
<svg style="position:absolute;left:1057.5px;top:2166px;" width="23" height="26" viewBox="0 0 23 26"><g fill="#afb1b3"><path d="M5 9A6.5 8 0 0 1 18 9V13.5H5Z"/><rect x="0" y="9.6" width="23" height="2.6"/><rect x="6" y="14" width="11" height="6" /><path d="M2 26V23A3 3 0 0 1 5 20H18A3 3 0 0 1 21 23V26Z"/></g></svg>
<svg style="position:absolute;left:3134px;top:2166px;" width="26.4" height="26.4" viewBox="0 0 26.4 26.4"><path d="M13.2 0A13.2 13.2 0 0 1 26.4 13.2V26.4H13.2A13.2 13.2 0 0 1 13.2 0Z" fill="#c75450"/></svg>
<div class="t" style="left:3141.0px;top:2167.1px;font-size:20px;line-height:26px;color:#ffffff;font-weight:bold;">4</div>
<svg style="position:absolute;left:3314px;top:2166px;" width="26" height="24" viewBox="0 0 26 24"><path d="M0 0H18V2.2H2.2V12H0ZM4.4 4.4H22V9H19.8V6.6H6.6V16H9V18.2H4.4Z" fill="#afb1b3"/><circle cx="16.6" cy="14.6" r="4.6" fill="none" stroke="#afb1b3" stroke-width="2.2"/><path d="M20 18L25 23" stroke="#afb1b3" stroke-width="2.6"/></svg>
<svg style="position:absolute;left:12px;top:2208.5px;" width="24" height="24" viewBox="0 0 24 24"><rect x="6" y="1" width="17" height="17" fill="none" stroke="#afb1b3" stroke-width="2"/><path d="M1 6V23H18" fill="none" stroke="#afb1b3" stroke-width="2"/></svg>
<div class="t" style="left:61.8px;top:2205.9px;font-size:22.4px;line-height:29px;color:#bbbbbb;letter-spacing:0.33px;">Failed to start monitoring emulator-5554 (today 12:54)</div>
<div class="t" style="left:3055.7px;top:2205.9px;font-size:22.4px;line-height:29px;color:#bbbbbb;letter-spacing:0.33px;">106:9</div>
<div class="t" style="left:3137.6px;top:2205.9px;font-size:22.4px;line-height:29px;color:#bbbbbb;letter-spacing:-1.02px;">LF</div>
<div class="t" style="left:3185.3px;top:2205.9px;font-size:22.4px;line-height:29px;color:#bbbbbb;letter-spacing:0.53px;">UTF-8</div>
<div class="t" style="left:3275.8px;top:2205.9px;font-size:22.4px;line-height:29px;color:#bbbbbb;letter-spacing:0.28px;">4 spaces</div>
<svg style="position:absolute;left:3389.5px;top:2208px;" width="23" height="23" viewBox="0 0 23 23"><path d="M2 9V5.4A4.6 4.6 0 0 1 11.2 5.4V8" fill="none" stroke="#afb1b3" stroke-width="2.4"/><rect x="7" y="10" width="16" height="13" fill="#afb1b3"/></svg>
<svg style="position:absolute;left:3440px;top:2207px;" width="24" height="24" viewBox="0 0 24 24"><circle cx="12" cy="12" r="12" fill="#c75450"/><rect x="10.2" y="5" width="3.6" height="9" fill="#3c3f41"/><rect x="10.2" y="16" width="3.6" height="3.6" fill="#3c3f41"/></svg>
<svg style="position:absolute;left:3485.7px;top:2206px;" width="28.4" height="28.4" viewBox="0 0 28.4 28.4"><circle cx="14.2" cy="14.2" r="14.2" fill="#afb1b3"/><circle cx="9.4" cy="10.4" r="1.9" fill="#3c3f41"/><circle cx="19" cy="10.4" r="1.9" fill="#3c3f41"/><path d="M7.4 16.6A7.4 7.4 0 0 0 21 16.6" fill="none" stroke="#3c3f41" stroke-width="2.2"/></svg>
<svg style="position:absolute;left:3534px;top:2206px;" width="28.4" height="28.4" viewBox="0 0 28.4 28.4"><circle cx="14.2" cy="14.2" r="14.2" fill="#afb1b3"/><circle cx="9.4" cy="10.4" r="1.9" fill="#3c3f41"/><circle cx="19" cy="10.4" r="1.9" fill="#3c3f41"/><path d="M7.8 21.4A7 7 0 0 1 20.6 21.4" fill="none" stroke="#3c3f41" stroke-width="2.2"/></svg>
</div></body></html>
